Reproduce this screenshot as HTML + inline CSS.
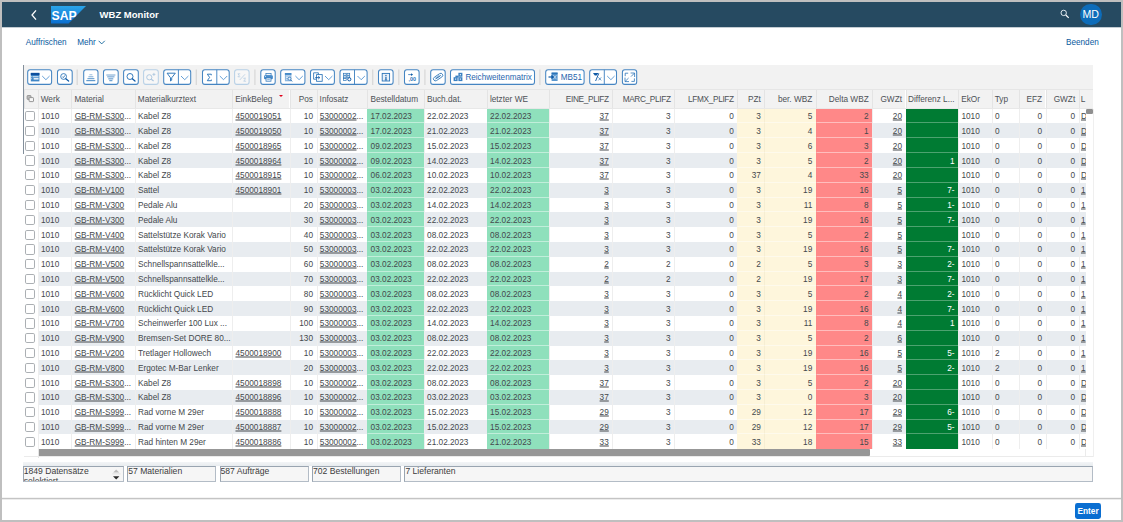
<!DOCTYPE html>
<html><head><meta charset="utf-8"><title>WBZ Monitor</title>
<style>
html,body{margin:0;padding:0;}
body{width:1123px;height:522px;overflow:hidden;background:#bfbfbf;font-family:"Liberation Sans",sans-serif;position:relative;}
#win{position:absolute;left:2px;top:2px;width:1119px;height:518px;background:#fff;overflow:hidden;}
#hdr{position:absolute;left:0;top:0;width:1119px;height:25px;background:#264a61;}
#title{position:absolute;left:97.6px;top:6.8px;font-size:9.5px;font-weight:bold;color:#fff;white-space:nowrap;}
.lnk{position:absolute;font-size:8.2px;color:#0a5a9e;white-space:nowrap;}
#tb{position:absolute;left:21.4px;top:63.4px;width:1069.6px;height:23.6px;background:#f2f2f2;}
.b{position:absolute;top:67.2px;height:13.7px;border:1px solid #4a87c0;border-radius:2.6px;background:#fff;box-sizing:content-box;}
.b.dis{border-color:#b5cfe4;}
.sep{position:absolute;top:67.5px;width:1px;height:15.5px;background:#d9d9d9;}
.dv{position:absolute;top:0;width:1px;height:13.7px;background:#4a87c0;}
.bt{position:absolute;top:69.2px;z-index:3;font-size:8.15px;line-height:13.7px;color:#1f65ad;white-space:nowrap;}
#grid{position:absolute;left:0;top:0;}
.h{position:absolute;top:87.4px;height:19.2px;background:#f2f2f2;font-size:8.25px;color:#4d5156;line-height:10px;padding-top:5.6px;white-space:nowrap;overflow:hidden;box-sizing:border-box;border-left:1px solid #e4e4e4;}
.c{position:absolute;height:14.81px;font-size:8.25px;color:#44484c;line-height:10px;white-space:nowrap;overflow:hidden;box-sizing:border-box;border-left:1px solid #eeeeee;}
.r{text-align:right;padding-right:3.5px;}
.l{padding-left:2.3px;}
.h.l{padding-left:2.1px;}
.u{text-decoration:underline;text-decoration-thickness:2px;text-underline-offset:0.2px;text-decoration-color:rgba(60,64,68,0.48);text-decoration-skip-ink:none;}
.cb{position:absolute;width:8.2px;height:8.2px;border:1px solid #abafb3;border-radius:1.8px;background:#fff;}
.st{position:absolute;top:464.3px;height:15.4px;border:1px solid #b3bcc6;border-top-color:#9aa5b1;border-left-color:#9aa5b1;background:#f6f6f6;font-size:8.6px;color:#3c3c3c;line-height:9.4px;overflow:hidden;box-sizing:border-box;padding-left:0;padding-top:0;white-space:normal;}
</style></head><body><div id="win">
<div id="hdr"></div><div style="position:absolute;left:0;top:25px;width:1119px;height:1px;background:#c3ccd3"></div>

<svg style="position:absolute;left:28px;top:7px" width="8" height="12" viewBox="0 0 8 12"><path d="M6 1.3 L2 6 L6 10.7" fill="none" stroke="#fff" stroke-width="1.3"/></svg>
<svg style="position:absolute;left:49px;top:4px" width="36" height="18" viewBox="0 0 36 18"><defs><linearGradient id="lg" x1="0" y1="0" x2="0" y2="1"><stop offset="0" stop-color="#2aa5ea"/><stop offset="1" stop-color="#0b6fd0"/></linearGradient></defs><path d="M0 0H35L17.6 17.4H0Z" fill="url(#lg)"/><text x="0.6" y="14.0" font-family="Liberation Sans" font-weight="bold" font-size="13.2" fill="#fff" textLength="25.2" lengthAdjust="spacingAndGlyphs">SAP</text></svg>
<div id="title">WBZ Monitor</div>
<svg style="position:absolute;left:1057px;top:6.4px" width="12" height="12" viewBox="0 0 12 12"><circle cx="4.7" cy="4.9" r="2.7" fill="none" stroke="#e8f0f6" stroke-width="0.95"/><path d="M6.8 7.0 L9.7 9.9" stroke="#fff" stroke-width="1.15"/></svg>
<div style="position:absolute;left:1078px;top:1.6px;width:21.6px;height:21.6px;border-radius:50%;background:#0d6cb9;color:#fff;font-size:10.6px;line-height:21.8px;text-align:center;">MD</div>
<div class="lnk" style="left:23.8px;top:36.2px">Auffrischen</div>
<div class="lnk" style="left:75.2px;top:36.2px">Mehr</div>
<svg style="position:absolute;left:96.4px;top:37.9px" width="7.4" height="5" viewBox="0 0 7 5"><path d="M0.4 0.8 L3.5 3.9 L6.6 0.8" fill="none" stroke="#0a6099" stroke-width="0.9"/></svg>
<div class="lnk" style="left:1064px;top:36.2px">Beenden</div>
<div id="tb"></div>
<div style="position:absolute;left:21px;top:62.8px;width:1.1px;height:89.4px;background:#838f9b;z-index:5"></div>
<div class="bt" style="left:463.4px">Reichweitenmatrix</div>
<div class="bt" style="left:558.8px">MB51</div>
<div class="h l" style="left:21.7px;width:13.9px;"></div>
<div class="h l" style="left:35.6px;width:33.8px;">Werk</div>
<div class="h l" style="left:69.4px;width:63.3px;">Material</div>
<div class="h l" style="left:132.7px;width:97.5px;">Materialkurztext</div>
<div class="h l" style="left:230.2px;width:57.3px;">EinkBeleg</div>
<div class="h r" style="left:287.5px;width:27.0px;">Pos</div>
<div class="h l" style="left:314.5px;width:50.8px;">Infosatz</div>
<div class="h l" style="left:365.3px;width:56.5px;">Bestelldatum</div>
<div class="h l" style="left:421.8px;width:63.0px;">Buch.dat.</div>
<div class="h l" style="left:484.8px;width:62.5px;">letzter WE</div>
<div class="h r" style="left:547.3px;width:63.0px;letter-spacing:-0.33px;">EINE_PLIFZ</div>
<div class="h r" style="left:610.3px;width:61.9px;letter-spacing:-0.33px;">MARC_PLIFZ</div>
<div class="h r" style="left:672.2px;width:63.1px;letter-spacing:-0.33px;">LFMX_PLIFZ</div>
<div class="h r" style="left:735.3px;width:27.1px;">PZt</div>
<div class="h r" style="left:762.4px;width:51.4px;">ber. WBZ</div>
<div class="h r" style="left:813.8px;width:56.4px;">Delta WBZ</div>
<div class="h r" style="left:870.2px;width:33.3px;">GWZt</div>
<div class="h r" style="left:903.5px;width:52.6px;">Differenz L...</div>
<div class="h l" style="left:956.1px;width:33.5px;">EkOr</div>
<div class="h l" style="left:989.6px;width:27.0px;">Typ</div>
<div class="h r" style="left:1016.6px;width:26.9px;">EFZ</div>
<div class="h r" style="left:1043.5px;width:33.2px;">GWZt</div>
<div class="h l" style="left:1076.7px;width:6.9px;padding-left:1.1px;">L</div>
<div style="position:absolute;left:1083.6px;top:87px;width:7.2px;height:19.6px;background:#f2f2f2"></div>
<div style="position:absolute;left:21.4px;top:106.1px;width:1069.6px;height:1px;background:#e8e8e8"></div>
<div style="position:absolute;left:21.4px;top:86.6px;width:1069.6px;height:1px;background:#e6e6e6"></div>
<svg style="position:absolute;left:24px;top:92px" width="10" height="10" viewBox="26 94 10 10"><rect x="27.1" y="95.5" width="3.9" height="3.9" rx="0.6" fill="#b9b9b9" stroke="#8c8c8c" stroke-width="0.8"/><rect x="29.1" y="97.6" width="4.4" height="4.0" rx="0.6" fill="#f6f6f6" stroke="#8c8c8c" stroke-width="0.9"/></svg>
<div style="position:absolute;left:277.1px;top:92.7px;width:0;height:0;border-left:2px solid transparent;border-right:2px solid transparent;border-top:2.2px solid #e0001a"></div>
<div style="position:absolute;left:21.7px;top:107px;width:1061.9px;height:14px;background:#fff"></div>
<div class="c l" style="left:21.7px;top:107px;height:14px;width:13.9px;padding-top:3px;border-left:none;background:#fff"></div>
<div class="cb" style="left:23.2px;top:109.07px"></div>
<div class="c l" style="left:35.6px;top:107px;height:14px;width:33.8px;padding-top:3px;">1010</div>
<div class="c l" style="left:69.4px;top:107px;height:14px;width:63.3px;padding-top:3px;"><span class="u">GB-RM-S300</span>...</div>
<div class="c l" style="left:132.7px;top:107px;height:14px;width:97.5px;padding-top:3px;">Kabel Z8</div>
<div class="c l" style="left:230.2px;top:107px;height:14px;width:57.3px;padding-top:3px;"><span class="u">4500019051</span></div>
<div class="c r" style="left:287.5px;top:107px;height:14px;width:27.0px;padding-top:3px;">10</div>
<div class="c l" style="left:314.5px;top:107px;height:14px;width:50.8px;padding-top:3px;"><span class="u">53000002</span>...</div>
<div class="c l" style="left:365.3px;top:107px;height:14px;width:56.5px;padding-top:3px;background:#8fe0bc;border-left-color:#8fe0bc;border-bottom:1px solid rgba(255,255,255,0.45);">17.02.2023</div>
<div class="c l" style="left:421.8px;top:107px;height:14px;width:63.0px;padding-top:3px;">22.02.2023</div>
<div class="c l" style="left:484.8px;top:107px;height:14px;width:62.5px;padding-top:3px;background:#8fe0bc;border-left-color:#8fe0bc;border-bottom:1px solid rgba(255,255,255,0.45);">22.02.2023</div>
<div class="c r" style="left:547.3px;top:107px;height:14px;width:63.0px;padding-top:3px;"><span class="u">37</span></div>
<div class="c r" style="left:610.3px;top:107px;height:14px;width:61.9px;padding-top:3px;">3</div>
<div class="c r" style="left:672.2px;top:107px;height:14px;width:63.1px;padding-top:3px;">0</div>
<div class="c r" style="left:735.3px;top:107px;height:14px;width:27.1px;padding-top:3px;background:#fef6dc;border-left-color:#fef6dc;border-bottom:1px solid rgba(255,255,255,0.45);">3</div>
<div class="c r" style="left:762.4px;top:107px;height:14px;width:51.4px;padding-top:3px;background:#fef6dc;border-left-color:#f6eed3;border-bottom:1px solid rgba(255,255,255,0.45);">5</div>
<div class="c r" style="left:813.8px;top:107px;height:14px;width:56.4px;padding-top:3px;background:#ff8888;border-left-color:#ff8888;border-bottom:1px solid rgba(255,255,255,0.45);">2</div>
<div class="c r" style="left:870.2px;top:107px;height:14px;width:33.3px;padding-top:3px;"><span class="u">20</span></div>
<div class="c r" style="left:903.5px;top:107px;height:14px;width:52.6px;padding-top:3px;background:#007b33;border-left-color:#007b33;border-bottom:1px solid rgba(255,255,255,0.3);color:#fff;"></div>
<div class="c l" style="left:956.1px;top:107px;height:14px;width:33.5px;padding-top:3px;">1010</div>
<div class="c l" style="left:989.6px;top:107px;height:14px;width:27.0px;padding-top:3px;">0</div>
<div class="c r" style="left:1016.6px;top:107px;height:14px;width:26.9px;padding-top:3px;">0</div>
<div class="c r" style="left:1043.5px;top:107px;height:14px;width:33.2px;padding-top:3px;">0</div>
<div class="c l" style="left:1076.7px;top:107px;height:14px;width:6.9px;padding-top:3px;padding-left:1.3px;"><span class="u">D</span></div>
<div style="position:absolute;left:21.7px;top:121px;width:1061.9px;height:15px;background:#e8ecf0"></div>
<div class="c l" style="left:21.7px;top:121px;height:15px;width:13.9px;padding-top:4px;border-left:none;background:#fff"></div>
<div class="cb" style="left:23.2px;top:123.88px"></div>
<div class="c l" style="left:35.6px;top:121px;height:15px;width:33.8px;padding-top:4px;">1010</div>
<div class="c l" style="left:69.4px;top:121px;height:15px;width:63.3px;padding-top:4px;"><span class="u">GB-RM-S300</span>...</div>
<div class="c l" style="left:132.7px;top:121px;height:15px;width:97.5px;padding-top:4px;">Kabel Z8</div>
<div class="c l" style="left:230.2px;top:121px;height:15px;width:57.3px;padding-top:4px;"><span class="u">4500019050</span></div>
<div class="c r" style="left:287.5px;top:121px;height:15px;width:27.0px;padding-top:4px;">10</div>
<div class="c l" style="left:314.5px;top:121px;height:15px;width:50.8px;padding-top:4px;"><span class="u">53000002</span>...</div>
<div class="c l" style="left:365.3px;top:121px;height:15px;width:56.5px;padding-top:4px;background:#8fe0bc;border-left-color:#8fe0bc;border-bottom:1px solid rgba(255,255,255,0.45);">17.02.2023</div>
<div class="c l" style="left:421.8px;top:121px;height:15px;width:63.0px;padding-top:4px;">21.02.2023</div>
<div class="c l" style="left:484.8px;top:121px;height:15px;width:62.5px;padding-top:4px;background:#8fe0bc;border-left-color:#8fe0bc;border-bottom:1px solid rgba(255,255,255,0.45);">21.02.2023</div>
<div class="c r" style="left:547.3px;top:121px;height:15px;width:63.0px;padding-top:4px;"><span class="u">37</span></div>
<div class="c r" style="left:610.3px;top:121px;height:15px;width:61.9px;padding-top:4px;">3</div>
<div class="c r" style="left:672.2px;top:121px;height:15px;width:63.1px;padding-top:4px;">0</div>
<div class="c r" style="left:735.3px;top:121px;height:15px;width:27.1px;padding-top:4px;background:#fef6dc;border-left-color:#fef6dc;border-bottom:1px solid rgba(255,255,255,0.45);">3</div>
<div class="c r" style="left:762.4px;top:121px;height:15px;width:51.4px;padding-top:4px;background:#fef6dc;border-left-color:#f6eed3;border-bottom:1px solid rgba(255,255,255,0.45);">4</div>
<div class="c r" style="left:813.8px;top:121px;height:15px;width:56.4px;padding-top:4px;background:#ff8888;border-left-color:#ff8888;border-bottom:1px solid rgba(255,255,255,0.45);">1</div>
<div class="c r" style="left:870.2px;top:121px;height:15px;width:33.3px;padding-top:4px;"><span class="u">20</span></div>
<div class="c r" style="left:903.5px;top:121px;height:15px;width:52.6px;padding-top:4px;background:#007b33;border-left-color:#007b33;border-bottom:1px solid rgba(255,255,255,0.3);color:#fff;"></div>
<div class="c l" style="left:956.1px;top:121px;height:15px;width:33.5px;padding-top:4px;">1010</div>
<div class="c l" style="left:989.6px;top:121px;height:15px;width:27.0px;padding-top:4px;">0</div>
<div class="c r" style="left:1016.6px;top:121px;height:15px;width:26.9px;padding-top:4px;">0</div>
<div class="c r" style="left:1043.5px;top:121px;height:15px;width:33.2px;padding-top:4px;">0</div>
<div class="c l" style="left:1076.7px;top:121px;height:15px;width:6.9px;padding-top:4px;padding-left:1.3px;"><span class="u">D</span></div>
<div style="position:absolute;left:21.7px;top:136px;width:1061.9px;height:15px;background:#fff"></div>
<div class="c l" style="left:21.7px;top:136px;height:15px;width:13.9px;padding-top:4px;border-left:none;background:#fff"></div>
<div class="cb" style="left:23.2px;top:138.68px"></div>
<div class="c l" style="left:35.6px;top:136px;height:15px;width:33.8px;padding-top:4px;">1010</div>
<div class="c l" style="left:69.4px;top:136px;height:15px;width:63.3px;padding-top:4px;"><span class="u">GB-RM-S300</span>...</div>
<div class="c l" style="left:132.7px;top:136px;height:15px;width:97.5px;padding-top:4px;">Kabel Z8</div>
<div class="c l" style="left:230.2px;top:136px;height:15px;width:57.3px;padding-top:4px;"><span class="u">4500018965</span></div>
<div class="c r" style="left:287.5px;top:136px;height:15px;width:27.0px;padding-top:4px;">10</div>
<div class="c l" style="left:314.5px;top:136px;height:15px;width:50.8px;padding-top:4px;"><span class="u">53000002</span>...</div>
<div class="c l" style="left:365.3px;top:136px;height:15px;width:56.5px;padding-top:4px;background:#8fe0bc;border-left-color:#8fe0bc;border-bottom:1px solid rgba(255,255,255,0.45);">09.02.2023</div>
<div class="c l" style="left:421.8px;top:136px;height:15px;width:63.0px;padding-top:4px;">15.02.2023</div>
<div class="c l" style="left:484.8px;top:136px;height:15px;width:62.5px;padding-top:4px;background:#8fe0bc;border-left-color:#8fe0bc;border-bottom:1px solid rgba(255,255,255,0.45);">15.02.2023</div>
<div class="c r" style="left:547.3px;top:136px;height:15px;width:63.0px;padding-top:4px;"><span class="u">37</span></div>
<div class="c r" style="left:610.3px;top:136px;height:15px;width:61.9px;padding-top:4px;">3</div>
<div class="c r" style="left:672.2px;top:136px;height:15px;width:63.1px;padding-top:4px;">0</div>
<div class="c r" style="left:735.3px;top:136px;height:15px;width:27.1px;padding-top:4px;background:#fef6dc;border-left-color:#fef6dc;border-bottom:1px solid rgba(255,255,255,0.45);">3</div>
<div class="c r" style="left:762.4px;top:136px;height:15px;width:51.4px;padding-top:4px;background:#fef6dc;border-left-color:#f6eed3;border-bottom:1px solid rgba(255,255,255,0.45);">6</div>
<div class="c r" style="left:813.8px;top:136px;height:15px;width:56.4px;padding-top:4px;background:#ff8888;border-left-color:#ff8888;border-bottom:1px solid rgba(255,255,255,0.45);">3</div>
<div class="c r" style="left:870.2px;top:136px;height:15px;width:33.3px;padding-top:4px;"><span class="u">20</span></div>
<div class="c r" style="left:903.5px;top:136px;height:15px;width:52.6px;padding-top:4px;background:#007b33;border-left-color:#007b33;border-bottom:1px solid rgba(255,255,255,0.3);color:#fff;"></div>
<div class="c l" style="left:956.1px;top:136px;height:15px;width:33.5px;padding-top:4px;">1010</div>
<div class="c l" style="left:989.6px;top:136px;height:15px;width:27.0px;padding-top:4px;">0</div>
<div class="c r" style="left:1016.6px;top:136px;height:15px;width:26.9px;padding-top:4px;">0</div>
<div class="c r" style="left:1043.5px;top:136px;height:15px;width:33.2px;padding-top:4px;">0</div>
<div class="c l" style="left:1076.7px;top:136px;height:15px;width:6.9px;padding-top:4px;padding-left:1.3px;"><span class="u">D</span></div>
<div style="position:absolute;left:21.7px;top:151px;width:1061.9px;height:15px;background:#e8ecf0"></div>
<div class="c l" style="left:21.7px;top:151px;height:15px;width:13.9px;padding-top:4px;border-left:none;background:#fff"></div>
<div class="cb" style="left:23.2px;top:153.49px"></div>
<div class="c l" style="left:35.6px;top:151px;height:15px;width:33.8px;padding-top:4px;">1010</div>
<div class="c l" style="left:69.4px;top:151px;height:15px;width:63.3px;padding-top:4px;"><span class="u">GB-RM-S300</span>...</div>
<div class="c l" style="left:132.7px;top:151px;height:15px;width:97.5px;padding-top:4px;">Kabel Z8</div>
<div class="c l" style="left:230.2px;top:151px;height:15px;width:57.3px;padding-top:4px;"><span class="u">4500018964</span></div>
<div class="c r" style="left:287.5px;top:151px;height:15px;width:27.0px;padding-top:4px;">10</div>
<div class="c l" style="left:314.5px;top:151px;height:15px;width:50.8px;padding-top:4px;"><span class="u">53000002</span>...</div>
<div class="c l" style="left:365.3px;top:151px;height:15px;width:56.5px;padding-top:4px;background:#8fe0bc;border-left-color:#8fe0bc;border-bottom:1px solid rgba(255,255,255,0.45);">09.02.2023</div>
<div class="c l" style="left:421.8px;top:151px;height:15px;width:63.0px;padding-top:4px;">14.02.2023</div>
<div class="c l" style="left:484.8px;top:151px;height:15px;width:62.5px;padding-top:4px;background:#8fe0bc;border-left-color:#8fe0bc;border-bottom:1px solid rgba(255,255,255,0.45);">14.02.2023</div>
<div class="c r" style="left:547.3px;top:151px;height:15px;width:63.0px;padding-top:4px;"><span class="u">37</span></div>
<div class="c r" style="left:610.3px;top:151px;height:15px;width:61.9px;padding-top:4px;">3</div>
<div class="c r" style="left:672.2px;top:151px;height:15px;width:63.1px;padding-top:4px;">0</div>
<div class="c r" style="left:735.3px;top:151px;height:15px;width:27.1px;padding-top:4px;background:#fef6dc;border-left-color:#fef6dc;border-bottom:1px solid rgba(255,255,255,0.45);">3</div>
<div class="c r" style="left:762.4px;top:151px;height:15px;width:51.4px;padding-top:4px;background:#fef6dc;border-left-color:#f6eed3;border-bottom:1px solid rgba(255,255,255,0.45);">5</div>
<div class="c r" style="left:813.8px;top:151px;height:15px;width:56.4px;padding-top:4px;background:#ff8888;border-left-color:#ff8888;border-bottom:1px solid rgba(255,255,255,0.45);">2</div>
<div class="c r" style="left:870.2px;top:151px;height:15px;width:33.3px;padding-top:4px;"><span class="u">20</span></div>
<div class="c r" style="left:903.5px;top:151px;height:15px;width:52.6px;padding-top:4px;background:#007b33;border-left-color:#007b33;border-bottom:1px solid rgba(255,255,255,0.3);color:#fff;">1</div>
<div class="c l" style="left:956.1px;top:151px;height:15px;width:33.5px;padding-top:4px;">1010</div>
<div class="c l" style="left:989.6px;top:151px;height:15px;width:27.0px;padding-top:4px;">0</div>
<div class="c r" style="left:1016.6px;top:151px;height:15px;width:26.9px;padding-top:4px;">0</div>
<div class="c r" style="left:1043.5px;top:151px;height:15px;width:33.2px;padding-top:4px;">0</div>
<div class="c l" style="left:1076.7px;top:151px;height:15px;width:6.9px;padding-top:4px;padding-left:1.3px;"><span class="u">D</span></div>
<div style="position:absolute;left:21.7px;top:166px;width:1061.9px;height:15px;background:#fff"></div>
<div class="c l" style="left:21.7px;top:166px;height:15px;width:13.9px;padding-top:3px;border-left:none;background:#fff"></div>
<div class="cb" style="left:23.2px;top:168.29px"></div>
<div class="c l" style="left:35.6px;top:166px;height:15px;width:33.8px;padding-top:3px;">1010</div>
<div class="c l" style="left:69.4px;top:166px;height:15px;width:63.3px;padding-top:3px;"><span class="u">GB-RM-S300</span>...</div>
<div class="c l" style="left:132.7px;top:166px;height:15px;width:97.5px;padding-top:3px;">Kabel Z8</div>
<div class="c l" style="left:230.2px;top:166px;height:15px;width:57.3px;padding-top:3px;"><span class="u">4500018915</span></div>
<div class="c r" style="left:287.5px;top:166px;height:15px;width:27.0px;padding-top:3px;">10</div>
<div class="c l" style="left:314.5px;top:166px;height:15px;width:50.8px;padding-top:3px;"><span class="u">53000002</span>...</div>
<div class="c l" style="left:365.3px;top:166px;height:15px;width:56.5px;padding-top:3px;background:#8fe0bc;border-left-color:#8fe0bc;border-bottom:1px solid rgba(255,255,255,0.45);">06.02.2023</div>
<div class="c l" style="left:421.8px;top:166px;height:15px;width:63.0px;padding-top:3px;">10.02.2023</div>
<div class="c l" style="left:484.8px;top:166px;height:15px;width:62.5px;padding-top:3px;background:#8fe0bc;border-left-color:#8fe0bc;border-bottom:1px solid rgba(255,255,255,0.45);">10.02.2023</div>
<div class="c r" style="left:547.3px;top:166px;height:15px;width:63.0px;padding-top:3px;"><span class="u">37</span></div>
<div class="c r" style="left:610.3px;top:166px;height:15px;width:61.9px;padding-top:3px;">3</div>
<div class="c r" style="left:672.2px;top:166px;height:15px;width:63.1px;padding-top:3px;">0</div>
<div class="c r" style="left:735.3px;top:166px;height:15px;width:27.1px;padding-top:3px;background:#fef6dc;border-left-color:#fef6dc;border-bottom:1px solid rgba(255,255,255,0.45);">37</div>
<div class="c r" style="left:762.4px;top:166px;height:15px;width:51.4px;padding-top:3px;background:#fef6dc;border-left-color:#f6eed3;border-bottom:1px solid rgba(255,255,255,0.45);">4</div>
<div class="c r" style="left:813.8px;top:166px;height:15px;width:56.4px;padding-top:3px;background:#ff8888;border-left-color:#ff8888;border-bottom:1px solid rgba(255,255,255,0.45);">33</div>
<div class="c r" style="left:870.2px;top:166px;height:15px;width:33.3px;padding-top:3px;"><span class="u">20</span></div>
<div class="c r" style="left:903.5px;top:166px;height:15px;width:52.6px;padding-top:3px;background:#007b33;border-left-color:#007b33;border-bottom:1px solid rgba(255,255,255,0.3);color:#fff;"></div>
<div class="c l" style="left:956.1px;top:166px;height:15px;width:33.5px;padding-top:3px;">1010</div>
<div class="c l" style="left:989.6px;top:166px;height:15px;width:27.0px;padding-top:3px;">0</div>
<div class="c r" style="left:1016.6px;top:166px;height:15px;width:26.9px;padding-top:3px;">0</div>
<div class="c r" style="left:1043.5px;top:166px;height:15px;width:33.2px;padding-top:3px;">0</div>
<div class="c l" style="left:1076.7px;top:166px;height:15px;width:6.9px;padding-top:3px;padding-left:1.3px;"><span class="u">D</span></div>
<div style="position:absolute;left:21.7px;top:181px;width:1061.9px;height:15px;background:#e8ecf0"></div>
<div class="c l" style="left:21.7px;top:181px;height:15px;width:13.9px;padding-top:3px;border-left:none;background:#fff"></div>
<div class="cb" style="left:23.2px;top:183.10px"></div>
<div class="c l" style="left:35.6px;top:181px;height:15px;width:33.8px;padding-top:3px;">1010</div>
<div class="c l" style="left:69.4px;top:181px;height:15px;width:63.3px;padding-top:3px;"><span class="u">GB-RM-V100</span></div>
<div class="c l" style="left:132.7px;top:181px;height:15px;width:97.5px;padding-top:3px;">Sattel</div>
<div class="c l" style="left:230.2px;top:181px;height:15px;width:57.3px;padding-top:3px;"><span class="u">4500018901</span></div>
<div class="c r" style="left:287.5px;top:181px;height:15px;width:27.0px;padding-top:3px;">10</div>
<div class="c l" style="left:314.5px;top:181px;height:15px;width:50.8px;padding-top:3px;"><span class="u">53000003</span>...</div>
<div class="c l" style="left:365.3px;top:181px;height:15px;width:56.5px;padding-top:3px;background:#8fe0bc;border-left-color:#8fe0bc;border-bottom:1px solid rgba(255,255,255,0.45);">03.02.2023</div>
<div class="c l" style="left:421.8px;top:181px;height:15px;width:63.0px;padding-top:3px;">22.02.2023</div>
<div class="c l" style="left:484.8px;top:181px;height:15px;width:62.5px;padding-top:3px;background:#8fe0bc;border-left-color:#8fe0bc;border-bottom:1px solid rgba(255,255,255,0.45);">22.02.2023</div>
<div class="c r" style="left:547.3px;top:181px;height:15px;width:63.0px;padding-top:3px;"><span class="u">3</span></div>
<div class="c r" style="left:610.3px;top:181px;height:15px;width:61.9px;padding-top:3px;">3</div>
<div class="c r" style="left:672.2px;top:181px;height:15px;width:63.1px;padding-top:3px;">0</div>
<div class="c r" style="left:735.3px;top:181px;height:15px;width:27.1px;padding-top:3px;background:#fef6dc;border-left-color:#fef6dc;border-bottom:1px solid rgba(255,255,255,0.45);">3</div>
<div class="c r" style="left:762.4px;top:181px;height:15px;width:51.4px;padding-top:3px;background:#fef6dc;border-left-color:#f6eed3;border-bottom:1px solid rgba(255,255,255,0.45);">19</div>
<div class="c r" style="left:813.8px;top:181px;height:15px;width:56.4px;padding-top:3px;background:#ff8888;border-left-color:#ff8888;border-bottom:1px solid rgba(255,255,255,0.45);">16</div>
<div class="c r" style="left:870.2px;top:181px;height:15px;width:33.3px;padding-top:3px;"><span class="u">5</span></div>
<div class="c r" style="left:903.5px;top:181px;height:15px;width:52.6px;padding-top:3px;background:#007b33;border-left-color:#007b33;border-bottom:1px solid rgba(255,255,255,0.3);color:#fff;">7-</div>
<div class="c l" style="left:956.1px;top:181px;height:15px;width:33.5px;padding-top:3px;">1010</div>
<div class="c l" style="left:989.6px;top:181px;height:15px;width:27.0px;padding-top:3px;">0</div>
<div class="c r" style="left:1016.6px;top:181px;height:15px;width:26.9px;padding-top:3px;">0</div>
<div class="c r" style="left:1043.5px;top:181px;height:15px;width:33.2px;padding-top:3px;">0</div>
<div class="c l" style="left:1076.7px;top:181px;height:15px;width:6.9px;padding-top:3px;padding-left:1.3px;"><span class="u">1</span></div>
<div style="position:absolute;left:21.7px;top:196px;width:1061.9px;height:14px;background:#fff"></div>
<div class="c l" style="left:21.7px;top:196px;height:14px;width:13.9px;padding-top:3px;border-left:none;background:#fff"></div>
<div class="cb" style="left:23.2px;top:197.91px"></div>
<div class="c l" style="left:35.6px;top:196px;height:14px;width:33.8px;padding-top:3px;">1010</div>
<div class="c l" style="left:69.4px;top:196px;height:14px;width:63.3px;padding-top:3px;"><span class="u">GB-RM-V300</span></div>
<div class="c l" style="left:132.7px;top:196px;height:14px;width:97.5px;padding-top:3px;">Pedale Alu</div>
<div class="c l" style="left:230.2px;top:196px;height:14px;width:57.3px;padding-top:3px;"></div>
<div class="c r" style="left:287.5px;top:196px;height:14px;width:27.0px;padding-top:3px;">20</div>
<div class="c l" style="left:314.5px;top:196px;height:14px;width:50.8px;padding-top:3px;"><span class="u">53000003</span>...</div>
<div class="c l" style="left:365.3px;top:196px;height:14px;width:56.5px;padding-top:3px;background:#8fe0bc;border-left-color:#8fe0bc;border-bottom:1px solid rgba(255,255,255,0.45);">03.02.2023</div>
<div class="c l" style="left:421.8px;top:196px;height:14px;width:63.0px;padding-top:3px;">14.02.2023</div>
<div class="c l" style="left:484.8px;top:196px;height:14px;width:62.5px;padding-top:3px;background:#8fe0bc;border-left-color:#8fe0bc;border-bottom:1px solid rgba(255,255,255,0.45);">14.02.2023</div>
<div class="c r" style="left:547.3px;top:196px;height:14px;width:63.0px;padding-top:3px;"><span class="u">3</span></div>
<div class="c r" style="left:610.3px;top:196px;height:14px;width:61.9px;padding-top:3px;">3</div>
<div class="c r" style="left:672.2px;top:196px;height:14px;width:63.1px;padding-top:3px;">0</div>
<div class="c r" style="left:735.3px;top:196px;height:14px;width:27.1px;padding-top:3px;background:#fef6dc;border-left-color:#fef6dc;border-bottom:1px solid rgba(255,255,255,0.45);">3</div>
<div class="c r" style="left:762.4px;top:196px;height:14px;width:51.4px;padding-top:3px;background:#fef6dc;border-left-color:#f6eed3;border-bottom:1px solid rgba(255,255,255,0.45);">11</div>
<div class="c r" style="left:813.8px;top:196px;height:14px;width:56.4px;padding-top:3px;background:#ff8888;border-left-color:#ff8888;border-bottom:1px solid rgba(255,255,255,0.45);">8</div>
<div class="c r" style="left:870.2px;top:196px;height:14px;width:33.3px;padding-top:3px;"><span class="u">5</span></div>
<div class="c r" style="left:903.5px;top:196px;height:14px;width:52.6px;padding-top:3px;background:#007b33;border-left-color:#007b33;border-bottom:1px solid rgba(255,255,255,0.3);color:#fff;">1-</div>
<div class="c l" style="left:956.1px;top:196px;height:14px;width:33.5px;padding-top:3px;">1010</div>
<div class="c l" style="left:989.6px;top:196px;height:14px;width:27.0px;padding-top:3px;">0</div>
<div class="c r" style="left:1016.6px;top:196px;height:14px;width:26.9px;padding-top:3px;">0</div>
<div class="c r" style="left:1043.5px;top:196px;height:14px;width:33.2px;padding-top:3px;">0</div>
<div class="c l" style="left:1076.7px;top:196px;height:14px;width:6.9px;padding-top:3px;padding-left:1.3px;"><span class="u">1</span></div>
<div style="position:absolute;left:21.7px;top:210px;width:1061.9px;height:15px;background:#e8ecf0"></div>
<div class="c l" style="left:21.7px;top:210px;height:15px;width:13.9px;padding-top:4px;border-left:none;background:#fff"></div>
<div class="cb" style="left:23.2px;top:212.71px"></div>
<div class="c l" style="left:35.6px;top:210px;height:15px;width:33.8px;padding-top:4px;">1010</div>
<div class="c l" style="left:69.4px;top:210px;height:15px;width:63.3px;padding-top:4px;"><span class="u">GB-RM-V300</span></div>
<div class="c l" style="left:132.7px;top:210px;height:15px;width:97.5px;padding-top:4px;">Pedale Alu</div>
<div class="c l" style="left:230.2px;top:210px;height:15px;width:57.3px;padding-top:4px;"></div>
<div class="c r" style="left:287.5px;top:210px;height:15px;width:27.0px;padding-top:4px;">30</div>
<div class="c l" style="left:314.5px;top:210px;height:15px;width:50.8px;padding-top:4px;"><span class="u">53000003</span>...</div>
<div class="c l" style="left:365.3px;top:210px;height:15px;width:56.5px;padding-top:4px;background:#8fe0bc;border-left-color:#8fe0bc;border-bottom:1px solid rgba(255,255,255,0.45);">03.02.2023</div>
<div class="c l" style="left:421.8px;top:210px;height:15px;width:63.0px;padding-top:4px;">22.02.2023</div>
<div class="c l" style="left:484.8px;top:210px;height:15px;width:62.5px;padding-top:4px;background:#8fe0bc;border-left-color:#8fe0bc;border-bottom:1px solid rgba(255,255,255,0.45);">22.02.2023</div>
<div class="c r" style="left:547.3px;top:210px;height:15px;width:63.0px;padding-top:4px;"><span class="u">3</span></div>
<div class="c r" style="left:610.3px;top:210px;height:15px;width:61.9px;padding-top:4px;">3</div>
<div class="c r" style="left:672.2px;top:210px;height:15px;width:63.1px;padding-top:4px;">0</div>
<div class="c r" style="left:735.3px;top:210px;height:15px;width:27.1px;padding-top:4px;background:#fef6dc;border-left-color:#fef6dc;border-bottom:1px solid rgba(255,255,255,0.45);">3</div>
<div class="c r" style="left:762.4px;top:210px;height:15px;width:51.4px;padding-top:4px;background:#fef6dc;border-left-color:#f6eed3;border-bottom:1px solid rgba(255,255,255,0.45);">19</div>
<div class="c r" style="left:813.8px;top:210px;height:15px;width:56.4px;padding-top:4px;background:#ff8888;border-left-color:#ff8888;border-bottom:1px solid rgba(255,255,255,0.45);">16</div>
<div class="c r" style="left:870.2px;top:210px;height:15px;width:33.3px;padding-top:4px;"><span class="u">5</span></div>
<div class="c r" style="left:903.5px;top:210px;height:15px;width:52.6px;padding-top:4px;background:#007b33;border-left-color:#007b33;border-bottom:1px solid rgba(255,255,255,0.3);color:#fff;">7-</div>
<div class="c l" style="left:956.1px;top:210px;height:15px;width:33.5px;padding-top:4px;">1010</div>
<div class="c l" style="left:989.6px;top:210px;height:15px;width:27.0px;padding-top:4px;">0</div>
<div class="c r" style="left:1016.6px;top:210px;height:15px;width:26.9px;padding-top:4px;">0</div>
<div class="c r" style="left:1043.5px;top:210px;height:15px;width:33.2px;padding-top:4px;">0</div>
<div class="c l" style="left:1076.7px;top:210px;height:15px;width:6.9px;padding-top:4px;padding-left:1.3px;"><span class="u">1</span></div>
<div style="position:absolute;left:21.7px;top:225px;width:1061.9px;height:15px;background:#fff"></div>
<div class="c l" style="left:21.7px;top:225px;height:15px;width:13.9px;padding-top:4px;border-left:none;background:#fff"></div>
<div class="cb" style="left:23.2px;top:227.52px"></div>
<div class="c l" style="left:35.6px;top:225px;height:15px;width:33.8px;padding-top:4px;">1010</div>
<div class="c l" style="left:69.4px;top:225px;height:15px;width:63.3px;padding-top:4px;"><span class="u">GB-RM-V400</span></div>
<div class="c l" style="left:132.7px;top:225px;height:15px;width:97.5px;padding-top:4px;">Sattelstütze Korak Vario</div>
<div class="c l" style="left:230.2px;top:225px;height:15px;width:57.3px;padding-top:4px;"></div>
<div class="c r" style="left:287.5px;top:225px;height:15px;width:27.0px;padding-top:4px;">40</div>
<div class="c l" style="left:314.5px;top:225px;height:15px;width:50.8px;padding-top:4px;"><span class="u">53000003</span>...</div>
<div class="c l" style="left:365.3px;top:225px;height:15px;width:56.5px;padding-top:4px;background:#8fe0bc;border-left-color:#8fe0bc;border-bottom:1px solid rgba(255,255,255,0.45);">03.02.2023</div>
<div class="c l" style="left:421.8px;top:225px;height:15px;width:63.0px;padding-top:4px;">08.02.2023</div>
<div class="c l" style="left:484.8px;top:225px;height:15px;width:62.5px;padding-top:4px;background:#8fe0bc;border-left-color:#8fe0bc;border-bottom:1px solid rgba(255,255,255,0.45);">08.02.2023</div>
<div class="c r" style="left:547.3px;top:225px;height:15px;width:63.0px;padding-top:4px;"><span class="u">3</span></div>
<div class="c r" style="left:610.3px;top:225px;height:15px;width:61.9px;padding-top:4px;">3</div>
<div class="c r" style="left:672.2px;top:225px;height:15px;width:63.1px;padding-top:4px;">0</div>
<div class="c r" style="left:735.3px;top:225px;height:15px;width:27.1px;padding-top:4px;background:#fef6dc;border-left-color:#fef6dc;border-bottom:1px solid rgba(255,255,255,0.45);">3</div>
<div class="c r" style="left:762.4px;top:225px;height:15px;width:51.4px;padding-top:4px;background:#fef6dc;border-left-color:#f6eed3;border-bottom:1px solid rgba(255,255,255,0.45);">5</div>
<div class="c r" style="left:813.8px;top:225px;height:15px;width:56.4px;padding-top:4px;background:#ff8888;border-left-color:#ff8888;border-bottom:1px solid rgba(255,255,255,0.45);">2</div>
<div class="c r" style="left:870.2px;top:225px;height:15px;width:33.3px;padding-top:4px;"><span class="u">5</span></div>
<div class="c r" style="left:903.5px;top:225px;height:15px;width:52.6px;padding-top:4px;background:#007b33;border-left-color:#007b33;border-bottom:1px solid rgba(255,255,255,0.3);color:#fff;"></div>
<div class="c l" style="left:956.1px;top:225px;height:15px;width:33.5px;padding-top:4px;">1010</div>
<div class="c l" style="left:989.6px;top:225px;height:15px;width:27.0px;padding-top:4px;">0</div>
<div class="c r" style="left:1016.6px;top:225px;height:15px;width:26.9px;padding-top:4px;">0</div>
<div class="c r" style="left:1043.5px;top:225px;height:15px;width:33.2px;padding-top:4px;">0</div>
<div class="c l" style="left:1076.7px;top:225px;height:15px;width:6.9px;padding-top:4px;padding-left:1.3px;"><span class="u">1</span></div>
<div style="position:absolute;left:21.7px;top:240px;width:1061.9px;height:15px;background:#e8ecf0"></div>
<div class="c l" style="left:21.7px;top:240px;height:15px;width:13.9px;padding-top:3px;border-left:none;background:#fff"></div>
<div class="cb" style="left:23.2px;top:242.32px"></div>
<div class="c l" style="left:35.6px;top:240px;height:15px;width:33.8px;padding-top:3px;">1010</div>
<div class="c l" style="left:69.4px;top:240px;height:15px;width:63.3px;padding-top:3px;"><span class="u">GB-RM-V400</span></div>
<div class="c l" style="left:132.7px;top:240px;height:15px;width:97.5px;padding-top:3px;">Sattelstütze Korak Vario</div>
<div class="c l" style="left:230.2px;top:240px;height:15px;width:57.3px;padding-top:3px;"></div>
<div class="c r" style="left:287.5px;top:240px;height:15px;width:27.0px;padding-top:3px;">50</div>
<div class="c l" style="left:314.5px;top:240px;height:15px;width:50.8px;padding-top:3px;"><span class="u">53000003</span>...</div>
<div class="c l" style="left:365.3px;top:240px;height:15px;width:56.5px;padding-top:3px;background:#8fe0bc;border-left-color:#8fe0bc;border-bottom:1px solid rgba(255,255,255,0.45);">03.02.2023</div>
<div class="c l" style="left:421.8px;top:240px;height:15px;width:63.0px;padding-top:3px;">22.02.2023</div>
<div class="c l" style="left:484.8px;top:240px;height:15px;width:62.5px;padding-top:3px;background:#8fe0bc;border-left-color:#8fe0bc;border-bottom:1px solid rgba(255,255,255,0.45);">22.02.2023</div>
<div class="c r" style="left:547.3px;top:240px;height:15px;width:63.0px;padding-top:3px;"><span class="u">3</span></div>
<div class="c r" style="left:610.3px;top:240px;height:15px;width:61.9px;padding-top:3px;">3</div>
<div class="c r" style="left:672.2px;top:240px;height:15px;width:63.1px;padding-top:3px;">0</div>
<div class="c r" style="left:735.3px;top:240px;height:15px;width:27.1px;padding-top:3px;background:#fef6dc;border-left-color:#fef6dc;border-bottom:1px solid rgba(255,255,255,0.45);">3</div>
<div class="c r" style="left:762.4px;top:240px;height:15px;width:51.4px;padding-top:3px;background:#fef6dc;border-left-color:#f6eed3;border-bottom:1px solid rgba(255,255,255,0.45);">19</div>
<div class="c r" style="left:813.8px;top:240px;height:15px;width:56.4px;padding-top:3px;background:#ff8888;border-left-color:#ff8888;border-bottom:1px solid rgba(255,255,255,0.45);">16</div>
<div class="c r" style="left:870.2px;top:240px;height:15px;width:33.3px;padding-top:3px;"><span class="u">5</span></div>
<div class="c r" style="left:903.5px;top:240px;height:15px;width:52.6px;padding-top:3px;background:#007b33;border-left-color:#007b33;border-bottom:1px solid rgba(255,255,255,0.3);color:#fff;">7-</div>
<div class="c l" style="left:956.1px;top:240px;height:15px;width:33.5px;padding-top:3px;">1010</div>
<div class="c l" style="left:989.6px;top:240px;height:15px;width:27.0px;padding-top:3px;">0</div>
<div class="c r" style="left:1016.6px;top:240px;height:15px;width:26.9px;padding-top:3px;">0</div>
<div class="c r" style="left:1043.5px;top:240px;height:15px;width:33.2px;padding-top:3px;">0</div>
<div class="c l" style="left:1076.7px;top:240px;height:15px;width:6.9px;padding-top:3px;padding-left:1.3px;"><span class="u">1</span></div>
<div style="position:absolute;left:21.7px;top:255px;width:1061.9px;height:15px;background:#fff"></div>
<div class="c l" style="left:21.7px;top:255px;height:15px;width:13.9px;padding-top:3px;border-left:none;background:#fff"></div>
<div class="cb" style="left:23.2px;top:257.13px"></div>
<div class="c l" style="left:35.6px;top:255px;height:15px;width:33.8px;padding-top:3px;">1010</div>
<div class="c l" style="left:69.4px;top:255px;height:15px;width:63.3px;padding-top:3px;"><span class="u">GB-RM-V500</span></div>
<div class="c l" style="left:132.7px;top:255px;height:15px;width:97.5px;padding-top:3px;">Schnellspannsattelkle...</div>
<div class="c l" style="left:230.2px;top:255px;height:15px;width:57.3px;padding-top:3px;"></div>
<div class="c r" style="left:287.5px;top:255px;height:15px;width:27.0px;padding-top:3px;">60</div>
<div class="c l" style="left:314.5px;top:255px;height:15px;width:50.8px;padding-top:3px;"><span class="u">53000003</span>...</div>
<div class="c l" style="left:365.3px;top:255px;height:15px;width:56.5px;padding-top:3px;background:#8fe0bc;border-left-color:#8fe0bc;border-bottom:1px solid rgba(255,255,255,0.45);">03.02.2023</div>
<div class="c l" style="left:421.8px;top:255px;height:15px;width:63.0px;padding-top:3px;">08.02.2023</div>
<div class="c l" style="left:484.8px;top:255px;height:15px;width:62.5px;padding-top:3px;background:#8fe0bc;border-left-color:#8fe0bc;border-bottom:1px solid rgba(255,255,255,0.45);">08.02.2023</div>
<div class="c r" style="left:547.3px;top:255px;height:15px;width:63.0px;padding-top:3px;"><span class="u">2</span></div>
<div class="c r" style="left:610.3px;top:255px;height:15px;width:61.9px;padding-top:3px;">2</div>
<div class="c r" style="left:672.2px;top:255px;height:15px;width:63.1px;padding-top:3px;">0</div>
<div class="c r" style="left:735.3px;top:255px;height:15px;width:27.1px;padding-top:3px;background:#fef6dc;border-left-color:#fef6dc;border-bottom:1px solid rgba(255,255,255,0.45);">2</div>
<div class="c r" style="left:762.4px;top:255px;height:15px;width:51.4px;padding-top:3px;background:#fef6dc;border-left-color:#f6eed3;border-bottom:1px solid rgba(255,255,255,0.45);">5</div>
<div class="c r" style="left:813.8px;top:255px;height:15px;width:56.4px;padding-top:3px;background:#ff8888;border-left-color:#ff8888;border-bottom:1px solid rgba(255,255,255,0.45);">3</div>
<div class="c r" style="left:870.2px;top:255px;height:15px;width:33.3px;padding-top:3px;"><span class="u">3</span></div>
<div class="c r" style="left:903.5px;top:255px;height:15px;width:52.6px;padding-top:3px;background:#007b33;border-left-color:#007b33;border-bottom:1px solid rgba(255,255,255,0.3);color:#fff;">2-</div>
<div class="c l" style="left:956.1px;top:255px;height:15px;width:33.5px;padding-top:3px;">1010</div>
<div class="c l" style="left:989.6px;top:255px;height:15px;width:27.0px;padding-top:3px;">0</div>
<div class="c r" style="left:1016.6px;top:255px;height:15px;width:26.9px;padding-top:3px;">0</div>
<div class="c r" style="left:1043.5px;top:255px;height:15px;width:33.2px;padding-top:3px;">0</div>
<div class="c l" style="left:1076.7px;top:255px;height:15px;width:6.9px;padding-top:3px;padding-left:1.3px;"><span class="u">1</span></div>
<div style="position:absolute;left:21.7px;top:270px;width:1061.9px;height:14px;background:#e8ecf0"></div>
<div class="c l" style="left:21.7px;top:270px;height:14px;width:13.9px;padding-top:3px;border-left:none;background:#fff"></div>
<div class="cb" style="left:23.2px;top:271.94px"></div>
<div class="c l" style="left:35.6px;top:270px;height:14px;width:33.8px;padding-top:3px;">1010</div>
<div class="c l" style="left:69.4px;top:270px;height:14px;width:63.3px;padding-top:3px;"><span class="u">GB-RM-V500</span></div>
<div class="c l" style="left:132.7px;top:270px;height:14px;width:97.5px;padding-top:3px;">Schnellspannsattelkle...</div>
<div class="c l" style="left:230.2px;top:270px;height:14px;width:57.3px;padding-top:3px;"></div>
<div class="c r" style="left:287.5px;top:270px;height:14px;width:27.0px;padding-top:3px;">70</div>
<div class="c l" style="left:314.5px;top:270px;height:14px;width:50.8px;padding-top:3px;"><span class="u">53000003</span>...</div>
<div class="c l" style="left:365.3px;top:270px;height:14px;width:56.5px;padding-top:3px;background:#8fe0bc;border-left-color:#8fe0bc;border-bottom:1px solid rgba(255,255,255,0.45);">03.02.2023</div>
<div class="c l" style="left:421.8px;top:270px;height:14px;width:63.0px;padding-top:3px;">22.02.2023</div>
<div class="c l" style="left:484.8px;top:270px;height:14px;width:62.5px;padding-top:3px;background:#8fe0bc;border-left-color:#8fe0bc;border-bottom:1px solid rgba(255,255,255,0.45);">22.02.2023</div>
<div class="c r" style="left:547.3px;top:270px;height:14px;width:63.0px;padding-top:3px;"><span class="u">2</span></div>
<div class="c r" style="left:610.3px;top:270px;height:14px;width:61.9px;padding-top:3px;">2</div>
<div class="c r" style="left:672.2px;top:270px;height:14px;width:63.1px;padding-top:3px;">0</div>
<div class="c r" style="left:735.3px;top:270px;height:14px;width:27.1px;padding-top:3px;background:#fef6dc;border-left-color:#fef6dc;border-bottom:1px solid rgba(255,255,255,0.45);">2</div>
<div class="c r" style="left:762.4px;top:270px;height:14px;width:51.4px;padding-top:3px;background:#fef6dc;border-left-color:#f6eed3;border-bottom:1px solid rgba(255,255,255,0.45);">19</div>
<div class="c r" style="left:813.8px;top:270px;height:14px;width:56.4px;padding-top:3px;background:#ff8888;border-left-color:#ff8888;border-bottom:1px solid rgba(255,255,255,0.45);">17</div>
<div class="c r" style="left:870.2px;top:270px;height:14px;width:33.3px;padding-top:3px;"><span class="u">3</span></div>
<div class="c r" style="left:903.5px;top:270px;height:14px;width:52.6px;padding-top:3px;background:#007b33;border-left-color:#007b33;border-bottom:1px solid rgba(255,255,255,0.3);color:#fff;">7-</div>
<div class="c l" style="left:956.1px;top:270px;height:14px;width:33.5px;padding-top:3px;">1010</div>
<div class="c l" style="left:989.6px;top:270px;height:14px;width:27.0px;padding-top:3px;">0</div>
<div class="c r" style="left:1016.6px;top:270px;height:14px;width:26.9px;padding-top:3px;">0</div>
<div class="c r" style="left:1043.5px;top:270px;height:14px;width:33.2px;padding-top:3px;">0</div>
<div class="c l" style="left:1076.7px;top:270px;height:14px;width:6.9px;padding-top:3px;padding-left:1.3px;"><span class="u">1</span></div>
<div style="position:absolute;left:21.7px;top:284px;width:1061.9px;height:15px;background:#fff"></div>
<div class="c l" style="left:21.7px;top:284px;height:15px;width:13.9px;padding-top:4px;border-left:none;background:#fff"></div>
<div class="cb" style="left:23.2px;top:286.74px"></div>
<div class="c l" style="left:35.6px;top:284px;height:15px;width:33.8px;padding-top:4px;">1010</div>
<div class="c l" style="left:69.4px;top:284px;height:15px;width:63.3px;padding-top:4px;"><span class="u">GB-RM-V600</span></div>
<div class="c l" style="left:132.7px;top:284px;height:15px;width:97.5px;padding-top:4px;">Rücklicht Quick LED</div>
<div class="c l" style="left:230.2px;top:284px;height:15px;width:57.3px;padding-top:4px;"></div>
<div class="c r" style="left:287.5px;top:284px;height:15px;width:27.0px;padding-top:4px;">80</div>
<div class="c l" style="left:314.5px;top:284px;height:15px;width:50.8px;padding-top:4px;"><span class="u">53000003</span>...</div>
<div class="c l" style="left:365.3px;top:284px;height:15px;width:56.5px;padding-top:4px;background:#8fe0bc;border-left-color:#8fe0bc;border-bottom:1px solid rgba(255,255,255,0.45);">03.02.2023</div>
<div class="c l" style="left:421.8px;top:284px;height:15px;width:63.0px;padding-top:4px;">08.02.2023</div>
<div class="c l" style="left:484.8px;top:284px;height:15px;width:62.5px;padding-top:4px;background:#8fe0bc;border-left-color:#8fe0bc;border-bottom:1px solid rgba(255,255,255,0.45);">08.02.2023</div>
<div class="c r" style="left:547.3px;top:284px;height:15px;width:63.0px;padding-top:4px;"><span class="u">3</span></div>
<div class="c r" style="left:610.3px;top:284px;height:15px;width:61.9px;padding-top:4px;">3</div>
<div class="c r" style="left:672.2px;top:284px;height:15px;width:63.1px;padding-top:4px;">0</div>
<div class="c r" style="left:735.3px;top:284px;height:15px;width:27.1px;padding-top:4px;background:#fef6dc;border-left-color:#fef6dc;border-bottom:1px solid rgba(255,255,255,0.45);">3</div>
<div class="c r" style="left:762.4px;top:284px;height:15px;width:51.4px;padding-top:4px;background:#fef6dc;border-left-color:#f6eed3;border-bottom:1px solid rgba(255,255,255,0.45);">5</div>
<div class="c r" style="left:813.8px;top:284px;height:15px;width:56.4px;padding-top:4px;background:#ff8888;border-left-color:#ff8888;border-bottom:1px solid rgba(255,255,255,0.45);">2</div>
<div class="c r" style="left:870.2px;top:284px;height:15px;width:33.3px;padding-top:4px;"><span class="u">4</span></div>
<div class="c r" style="left:903.5px;top:284px;height:15px;width:52.6px;padding-top:4px;background:#007b33;border-left-color:#007b33;border-bottom:1px solid rgba(255,255,255,0.3);color:#fff;">2-</div>
<div class="c l" style="left:956.1px;top:284px;height:15px;width:33.5px;padding-top:4px;">1010</div>
<div class="c l" style="left:989.6px;top:284px;height:15px;width:27.0px;padding-top:4px;">0</div>
<div class="c r" style="left:1016.6px;top:284px;height:15px;width:26.9px;padding-top:4px;">0</div>
<div class="c r" style="left:1043.5px;top:284px;height:15px;width:33.2px;padding-top:4px;">0</div>
<div class="c l" style="left:1076.7px;top:284px;height:15px;width:6.9px;padding-top:4px;padding-left:1.3px;"><span class="u">1</span></div>
<div style="position:absolute;left:21.7px;top:299px;width:1061.9px;height:15px;background:#e8ecf0"></div>
<div class="c l" style="left:21.7px;top:299px;height:15px;width:13.9px;padding-top:4px;border-left:none;background:#fff"></div>
<div class="cb" style="left:23.2px;top:301.55px"></div>
<div class="c l" style="left:35.6px;top:299px;height:15px;width:33.8px;padding-top:4px;">1010</div>
<div class="c l" style="left:69.4px;top:299px;height:15px;width:63.3px;padding-top:4px;"><span class="u">GB-RM-V600</span></div>
<div class="c l" style="left:132.7px;top:299px;height:15px;width:97.5px;padding-top:4px;">Rücklicht Quick LED</div>
<div class="c l" style="left:230.2px;top:299px;height:15px;width:57.3px;padding-top:4px;"></div>
<div class="c r" style="left:287.5px;top:299px;height:15px;width:27.0px;padding-top:4px;">90</div>
<div class="c l" style="left:314.5px;top:299px;height:15px;width:50.8px;padding-top:4px;"><span class="u">53000003</span>...</div>
<div class="c l" style="left:365.3px;top:299px;height:15px;width:56.5px;padding-top:4px;background:#8fe0bc;border-left-color:#8fe0bc;border-bottom:1px solid rgba(255,255,255,0.45);">03.02.2023</div>
<div class="c l" style="left:421.8px;top:299px;height:15px;width:63.0px;padding-top:4px;">22.02.2023</div>
<div class="c l" style="left:484.8px;top:299px;height:15px;width:62.5px;padding-top:4px;background:#8fe0bc;border-left-color:#8fe0bc;border-bottom:1px solid rgba(255,255,255,0.45);">22.02.2023</div>
<div class="c r" style="left:547.3px;top:299px;height:15px;width:63.0px;padding-top:4px;"><span class="u">3</span></div>
<div class="c r" style="left:610.3px;top:299px;height:15px;width:61.9px;padding-top:4px;">3</div>
<div class="c r" style="left:672.2px;top:299px;height:15px;width:63.1px;padding-top:4px;">0</div>
<div class="c r" style="left:735.3px;top:299px;height:15px;width:27.1px;padding-top:4px;background:#fef6dc;border-left-color:#fef6dc;border-bottom:1px solid rgba(255,255,255,0.45);">3</div>
<div class="c r" style="left:762.4px;top:299px;height:15px;width:51.4px;padding-top:4px;background:#fef6dc;border-left-color:#f6eed3;border-bottom:1px solid rgba(255,255,255,0.45);">19</div>
<div class="c r" style="left:813.8px;top:299px;height:15px;width:56.4px;padding-top:4px;background:#ff8888;border-left-color:#ff8888;border-bottom:1px solid rgba(255,255,255,0.45);">16</div>
<div class="c r" style="left:870.2px;top:299px;height:15px;width:33.3px;padding-top:4px;"><span class="u">4</span></div>
<div class="c r" style="left:903.5px;top:299px;height:15px;width:52.6px;padding-top:4px;background:#007b33;border-left-color:#007b33;border-bottom:1px solid rgba(255,255,255,0.3);color:#fff;">7-</div>
<div class="c l" style="left:956.1px;top:299px;height:15px;width:33.5px;padding-top:4px;">1010</div>
<div class="c l" style="left:989.6px;top:299px;height:15px;width:27.0px;padding-top:4px;">0</div>
<div class="c r" style="left:1016.6px;top:299px;height:15px;width:26.9px;padding-top:4px;">0</div>
<div class="c r" style="left:1043.5px;top:299px;height:15px;width:33.2px;padding-top:4px;">0</div>
<div class="c l" style="left:1076.7px;top:299px;height:15px;width:6.9px;padding-top:4px;padding-left:1.3px;"><span class="u">1</span></div>
<div style="position:absolute;left:21.7px;top:314px;width:1061.9px;height:15px;background:#fff"></div>
<div class="c l" style="left:21.7px;top:314px;height:15px;width:13.9px;padding-top:3px;border-left:none;background:#fff"></div>
<div class="cb" style="left:23.2px;top:316.35px"></div>
<div class="c l" style="left:35.6px;top:314px;height:15px;width:33.8px;padding-top:3px;">1010</div>
<div class="c l" style="left:69.4px;top:314px;height:15px;width:63.3px;padding-top:3px;"><span class="u">GB-RM-V700</span></div>
<div class="c l" style="left:132.7px;top:314px;height:15px;width:97.5px;padding-top:3px;">Scheinwerfer 100 Lux ...</div>
<div class="c l" style="left:230.2px;top:314px;height:15px;width:57.3px;padding-top:3px;"></div>
<div class="c r" style="left:287.5px;top:314px;height:15px;width:27.0px;padding-top:3px;">100</div>
<div class="c l" style="left:314.5px;top:314px;height:15px;width:50.8px;padding-top:3px;"><span class="u">53000003</span>...</div>
<div class="c l" style="left:365.3px;top:314px;height:15px;width:56.5px;padding-top:3px;background:#8fe0bc;border-left-color:#8fe0bc;border-bottom:1px solid rgba(255,255,255,0.45);">03.02.2023</div>
<div class="c l" style="left:421.8px;top:314px;height:15px;width:63.0px;padding-top:3px;">14.02.2023</div>
<div class="c l" style="left:484.8px;top:314px;height:15px;width:62.5px;padding-top:3px;background:#8fe0bc;border-left-color:#8fe0bc;border-bottom:1px solid rgba(255,255,255,0.45);">14.02.2023</div>
<div class="c r" style="left:547.3px;top:314px;height:15px;width:63.0px;padding-top:3px;"><span class="u">3</span></div>
<div class="c r" style="left:610.3px;top:314px;height:15px;width:61.9px;padding-top:3px;">3</div>
<div class="c r" style="left:672.2px;top:314px;height:15px;width:63.1px;padding-top:3px;">0</div>
<div class="c r" style="left:735.3px;top:314px;height:15px;width:27.1px;padding-top:3px;background:#fef6dc;border-left-color:#fef6dc;border-bottom:1px solid rgba(255,255,255,0.45);">3</div>
<div class="c r" style="left:762.4px;top:314px;height:15px;width:51.4px;padding-top:3px;background:#fef6dc;border-left-color:#f6eed3;border-bottom:1px solid rgba(255,255,255,0.45);">11</div>
<div class="c r" style="left:813.8px;top:314px;height:15px;width:56.4px;padding-top:3px;background:#ff8888;border-left-color:#ff8888;border-bottom:1px solid rgba(255,255,255,0.45);">8</div>
<div class="c r" style="left:870.2px;top:314px;height:15px;width:33.3px;padding-top:3px;"><span class="u">4</span></div>
<div class="c r" style="left:903.5px;top:314px;height:15px;width:52.6px;padding-top:3px;background:#007b33;border-left-color:#007b33;border-bottom:1px solid rgba(255,255,255,0.3);color:#fff;">1</div>
<div class="c l" style="left:956.1px;top:314px;height:15px;width:33.5px;padding-top:3px;">1010</div>
<div class="c l" style="left:989.6px;top:314px;height:15px;width:27.0px;padding-top:3px;">0</div>
<div class="c r" style="left:1016.6px;top:314px;height:15px;width:26.9px;padding-top:3px;">0</div>
<div class="c r" style="left:1043.5px;top:314px;height:15px;width:33.2px;padding-top:3px;">0</div>
<div class="c l" style="left:1076.7px;top:314px;height:15px;width:6.9px;padding-top:3px;padding-left:1.3px;"><span class="u">1</span></div>
<div style="position:absolute;left:21.7px;top:329px;width:1061.9px;height:15px;background:#e8ecf0"></div>
<div class="c l" style="left:21.7px;top:329px;height:15px;width:13.9px;padding-top:3px;border-left:none;background:#fff"></div>
<div class="cb" style="left:23.2px;top:331.16px"></div>
<div class="c l" style="left:35.6px;top:329px;height:15px;width:33.8px;padding-top:3px;">1010</div>
<div class="c l" style="left:69.4px;top:329px;height:15px;width:63.3px;padding-top:3px;"><span class="u">GB-RM-V900</span></div>
<div class="c l" style="left:132.7px;top:329px;height:15px;width:97.5px;padding-top:3px;">Bremsen-Set DORE 80...</div>
<div class="c l" style="left:230.2px;top:329px;height:15px;width:57.3px;padding-top:3px;"></div>
<div class="c r" style="left:287.5px;top:329px;height:15px;width:27.0px;padding-top:3px;">130</div>
<div class="c l" style="left:314.5px;top:329px;height:15px;width:50.8px;padding-top:3px;"><span class="u">53000003</span>...</div>
<div class="c l" style="left:365.3px;top:329px;height:15px;width:56.5px;padding-top:3px;background:#8fe0bc;border-left-color:#8fe0bc;border-bottom:1px solid rgba(255,255,255,0.45);">03.02.2023</div>
<div class="c l" style="left:421.8px;top:329px;height:15px;width:63.0px;padding-top:3px;">08.02.2023</div>
<div class="c l" style="left:484.8px;top:329px;height:15px;width:62.5px;padding-top:3px;background:#8fe0bc;border-left-color:#8fe0bc;border-bottom:1px solid rgba(255,255,255,0.45);">08.02.2023</div>
<div class="c r" style="left:547.3px;top:329px;height:15px;width:63.0px;padding-top:3px;"><span class="u">3</span></div>
<div class="c r" style="left:610.3px;top:329px;height:15px;width:61.9px;padding-top:3px;">3</div>
<div class="c r" style="left:672.2px;top:329px;height:15px;width:63.1px;padding-top:3px;">0</div>
<div class="c r" style="left:735.3px;top:329px;height:15px;width:27.1px;padding-top:3px;background:#fef6dc;border-left-color:#fef6dc;border-bottom:1px solid rgba(255,255,255,0.45);">3</div>
<div class="c r" style="left:762.4px;top:329px;height:15px;width:51.4px;padding-top:3px;background:#fef6dc;border-left-color:#f6eed3;border-bottom:1px solid rgba(255,255,255,0.45);">5</div>
<div class="c r" style="left:813.8px;top:329px;height:15px;width:56.4px;padding-top:3px;background:#ff8888;border-left-color:#ff8888;border-bottom:1px solid rgba(255,255,255,0.45);">2</div>
<div class="c r" style="left:870.2px;top:329px;height:15px;width:33.3px;padding-top:3px;"><span class="u">6</span></div>
<div class="c r" style="left:903.5px;top:329px;height:15px;width:52.6px;padding-top:3px;background:#007b33;border-left-color:#007b33;border-bottom:1px solid rgba(255,255,255,0.3);color:#fff;"></div>
<div class="c l" style="left:956.1px;top:329px;height:15px;width:33.5px;padding-top:3px;">1010</div>
<div class="c l" style="left:989.6px;top:329px;height:15px;width:27.0px;padding-top:3px;">0</div>
<div class="c r" style="left:1016.6px;top:329px;height:15px;width:26.9px;padding-top:3px;">0</div>
<div class="c r" style="left:1043.5px;top:329px;height:15px;width:33.2px;padding-top:3px;">0</div>
<div class="c l" style="left:1076.7px;top:329px;height:15px;width:6.9px;padding-top:3px;padding-left:1.3px;"><span class="u">1</span></div>
<div style="position:absolute;left:21.7px;top:344px;width:1061.9px;height:14px;background:#fff"></div>
<div class="c l" style="left:21.7px;top:344px;height:14px;width:13.9px;padding-top:3px;border-left:none;background:#fff"></div>
<div class="cb" style="left:23.2px;top:345.97px"></div>
<div class="c l" style="left:35.6px;top:344px;height:14px;width:33.8px;padding-top:3px;">1010</div>
<div class="c l" style="left:69.4px;top:344px;height:14px;width:63.3px;padding-top:3px;"><span class="u">GB-RM-V200</span></div>
<div class="c l" style="left:132.7px;top:344px;height:14px;width:97.5px;padding-top:3px;">Tretlager Hollowech</div>
<div class="c l" style="left:230.2px;top:344px;height:14px;width:57.3px;padding-top:3px;"><span class="u">4500018900</span></div>
<div class="c r" style="left:287.5px;top:344px;height:14px;width:27.0px;padding-top:3px;">10</div>
<div class="c l" style="left:314.5px;top:344px;height:14px;width:50.8px;padding-top:3px;"><span class="u">53000003</span>...</div>
<div class="c l" style="left:365.3px;top:344px;height:14px;width:56.5px;padding-top:3px;background:#8fe0bc;border-left-color:#8fe0bc;border-bottom:1px solid rgba(255,255,255,0.45);">03.02.2023</div>
<div class="c l" style="left:421.8px;top:344px;height:14px;width:63.0px;padding-top:3px;">22.02.2023</div>
<div class="c l" style="left:484.8px;top:344px;height:14px;width:62.5px;padding-top:3px;background:#8fe0bc;border-left-color:#8fe0bc;border-bottom:1px solid rgba(255,255,255,0.45);">22.02.2023</div>
<div class="c r" style="left:547.3px;top:344px;height:14px;width:63.0px;padding-top:3px;"><span class="u">3</span></div>
<div class="c r" style="left:610.3px;top:344px;height:14px;width:61.9px;padding-top:3px;">3</div>
<div class="c r" style="left:672.2px;top:344px;height:14px;width:63.1px;padding-top:3px;">0</div>
<div class="c r" style="left:735.3px;top:344px;height:14px;width:27.1px;padding-top:3px;background:#fef6dc;border-left-color:#fef6dc;border-bottom:1px solid rgba(255,255,255,0.45);">3</div>
<div class="c r" style="left:762.4px;top:344px;height:14px;width:51.4px;padding-top:3px;background:#fef6dc;border-left-color:#f6eed3;border-bottom:1px solid rgba(255,255,255,0.45);">19</div>
<div class="c r" style="left:813.8px;top:344px;height:14px;width:56.4px;padding-top:3px;background:#ff8888;border-left-color:#ff8888;border-bottom:1px solid rgba(255,255,255,0.45);">16</div>
<div class="c r" style="left:870.2px;top:344px;height:14px;width:33.3px;padding-top:3px;"><span class="u">5</span></div>
<div class="c r" style="left:903.5px;top:344px;height:14px;width:52.6px;padding-top:3px;background:#007b33;border-left-color:#007b33;border-bottom:1px solid rgba(255,255,255,0.3);color:#fff;">5-</div>
<div class="c l" style="left:956.1px;top:344px;height:14px;width:33.5px;padding-top:3px;">1010</div>
<div class="c l" style="left:989.6px;top:344px;height:14px;width:27.0px;padding-top:3px;">2</div>
<div class="c r" style="left:1016.6px;top:344px;height:14px;width:26.9px;padding-top:3px;">0</div>
<div class="c r" style="left:1043.5px;top:344px;height:14px;width:33.2px;padding-top:3px;">0</div>
<div class="c l" style="left:1076.7px;top:344px;height:14px;width:6.9px;padding-top:3px;padding-left:1.3px;"><span class="u">1</span></div>
<div style="position:absolute;left:21.7px;top:358px;width:1061.9px;height:15px;background:#e8ecf0"></div>
<div class="c l" style="left:21.7px;top:358px;height:15px;width:13.9px;padding-top:4px;border-left:none;background:#fff"></div>
<div class="cb" style="left:23.2px;top:360.77px"></div>
<div class="c l" style="left:35.6px;top:358px;height:15px;width:33.8px;padding-top:4px;">1010</div>
<div class="c l" style="left:69.4px;top:358px;height:15px;width:63.3px;padding-top:4px;"><span class="u">GB-RM-V800</span></div>
<div class="c l" style="left:132.7px;top:358px;height:15px;width:97.5px;padding-top:4px;">Ergotec M-Bar Lenker</div>
<div class="c l" style="left:230.2px;top:358px;height:15px;width:57.3px;padding-top:4px;"></div>
<div class="c r" style="left:287.5px;top:358px;height:15px;width:27.0px;padding-top:4px;">20</div>
<div class="c l" style="left:314.5px;top:358px;height:15px;width:50.8px;padding-top:4px;"><span class="u">53000003</span>...</div>
<div class="c l" style="left:365.3px;top:358px;height:15px;width:56.5px;padding-top:4px;background:#8fe0bc;border-left-color:#8fe0bc;border-bottom:1px solid rgba(255,255,255,0.45);">03.02.2023</div>
<div class="c l" style="left:421.8px;top:358px;height:15px;width:63.0px;padding-top:4px;">22.02.2023</div>
<div class="c l" style="left:484.8px;top:358px;height:15px;width:62.5px;padding-top:4px;background:#8fe0bc;border-left-color:#8fe0bc;border-bottom:1px solid rgba(255,255,255,0.45);">22.02.2023</div>
<div class="c r" style="left:547.3px;top:358px;height:15px;width:63.0px;padding-top:4px;"><span class="u">3</span></div>
<div class="c r" style="left:610.3px;top:358px;height:15px;width:61.9px;padding-top:4px;">3</div>
<div class="c r" style="left:672.2px;top:358px;height:15px;width:63.1px;padding-top:4px;">0</div>
<div class="c r" style="left:735.3px;top:358px;height:15px;width:27.1px;padding-top:4px;background:#fef6dc;border-left-color:#fef6dc;border-bottom:1px solid rgba(255,255,255,0.45);">3</div>
<div class="c r" style="left:762.4px;top:358px;height:15px;width:51.4px;padding-top:4px;background:#fef6dc;border-left-color:#f6eed3;border-bottom:1px solid rgba(255,255,255,0.45);">19</div>
<div class="c r" style="left:813.8px;top:358px;height:15px;width:56.4px;padding-top:4px;background:#ff8888;border-left-color:#ff8888;border-bottom:1px solid rgba(255,255,255,0.45);">16</div>
<div class="c r" style="left:870.2px;top:358px;height:15px;width:33.3px;padding-top:4px;"><span class="u">5</span></div>
<div class="c r" style="left:903.5px;top:358px;height:15px;width:52.6px;padding-top:4px;background:#007b33;border-left-color:#007b33;border-bottom:1px solid rgba(255,255,255,0.3);color:#fff;">2-</div>
<div class="c l" style="left:956.1px;top:358px;height:15px;width:33.5px;padding-top:4px;">1010</div>
<div class="c l" style="left:989.6px;top:358px;height:15px;width:27.0px;padding-top:4px;">2</div>
<div class="c r" style="left:1016.6px;top:358px;height:15px;width:26.9px;padding-top:4px;">0</div>
<div class="c r" style="left:1043.5px;top:358px;height:15px;width:33.2px;padding-top:4px;">0</div>
<div class="c l" style="left:1076.7px;top:358px;height:15px;width:6.9px;padding-top:4px;padding-left:1.3px;"><span class="u">1</span></div>
<div style="position:absolute;left:21.7px;top:373px;width:1061.9px;height:15px;background:#fff"></div>
<div class="c l" style="left:21.7px;top:373px;height:15px;width:13.9px;padding-top:4px;border-left:none;background:#fff"></div>
<div class="cb" style="left:23.2px;top:375.58px"></div>
<div class="c l" style="left:35.6px;top:373px;height:15px;width:33.8px;padding-top:4px;">1010</div>
<div class="c l" style="left:69.4px;top:373px;height:15px;width:63.3px;padding-top:4px;"><span class="u">GB-RM-S300</span>...</div>
<div class="c l" style="left:132.7px;top:373px;height:15px;width:97.5px;padding-top:4px;">Kabel Z8</div>
<div class="c l" style="left:230.2px;top:373px;height:15px;width:57.3px;padding-top:4px;"><span class="u">4500018898</span></div>
<div class="c r" style="left:287.5px;top:373px;height:15px;width:27.0px;padding-top:4px;">10</div>
<div class="c l" style="left:314.5px;top:373px;height:15px;width:50.8px;padding-top:4px;"><span class="u">53000002</span>...</div>
<div class="c l" style="left:365.3px;top:373px;height:15px;width:56.5px;padding-top:4px;background:#8fe0bc;border-left-color:#8fe0bc;border-bottom:1px solid rgba(255,255,255,0.45);">03.02.2023</div>
<div class="c l" style="left:421.8px;top:373px;height:15px;width:63.0px;padding-top:4px;">08.02.2023</div>
<div class="c l" style="left:484.8px;top:373px;height:15px;width:62.5px;padding-top:4px;background:#8fe0bc;border-left-color:#8fe0bc;border-bottom:1px solid rgba(255,255,255,0.45);">08.02.2023</div>
<div class="c r" style="left:547.3px;top:373px;height:15px;width:63.0px;padding-top:4px;"><span class="u">37</span></div>
<div class="c r" style="left:610.3px;top:373px;height:15px;width:61.9px;padding-top:4px;">3</div>
<div class="c r" style="left:672.2px;top:373px;height:15px;width:63.1px;padding-top:4px;">0</div>
<div class="c r" style="left:735.3px;top:373px;height:15px;width:27.1px;padding-top:4px;background:#fef6dc;border-left-color:#fef6dc;border-bottom:1px solid rgba(255,255,255,0.45);">3</div>
<div class="c r" style="left:762.4px;top:373px;height:15px;width:51.4px;padding-top:4px;background:#fef6dc;border-left-color:#f6eed3;border-bottom:1px solid rgba(255,255,255,0.45);">5</div>
<div class="c r" style="left:813.8px;top:373px;height:15px;width:56.4px;padding-top:4px;background:#ff8888;border-left-color:#ff8888;border-bottom:1px solid rgba(255,255,255,0.45);">2</div>
<div class="c r" style="left:870.2px;top:373px;height:15px;width:33.3px;padding-top:4px;"><span class="u">20</span></div>
<div class="c r" style="left:903.5px;top:373px;height:15px;width:52.6px;padding-top:4px;background:#007b33;border-left-color:#007b33;border-bottom:1px solid rgba(255,255,255,0.3);color:#fff;"></div>
<div class="c l" style="left:956.1px;top:373px;height:15px;width:33.5px;padding-top:4px;">1010</div>
<div class="c l" style="left:989.6px;top:373px;height:15px;width:27.0px;padding-top:4px;">0</div>
<div class="c r" style="left:1016.6px;top:373px;height:15px;width:26.9px;padding-top:4px;">0</div>
<div class="c r" style="left:1043.5px;top:373px;height:15px;width:33.2px;padding-top:4px;">0</div>
<div class="c l" style="left:1076.7px;top:373px;height:15px;width:6.9px;padding-top:4px;padding-left:1.3px;"><span class="u">D</span></div>
<div style="position:absolute;left:21.7px;top:388px;width:1061.9px;height:15px;background:#e8ecf0"></div>
<div class="c l" style="left:21.7px;top:388px;height:15px;width:13.9px;padding-top:3px;border-left:none;background:#fff"></div>
<div class="cb" style="left:23.2px;top:390.38px"></div>
<div class="c l" style="left:35.6px;top:388px;height:15px;width:33.8px;padding-top:3px;">1010</div>
<div class="c l" style="left:69.4px;top:388px;height:15px;width:63.3px;padding-top:3px;"><span class="u">GB-RM-S300</span>...</div>
<div class="c l" style="left:132.7px;top:388px;height:15px;width:97.5px;padding-top:3px;">Kabel Z8</div>
<div class="c l" style="left:230.2px;top:388px;height:15px;width:57.3px;padding-top:3px;"><span class="u">4500018896</span></div>
<div class="c r" style="left:287.5px;top:388px;height:15px;width:27.0px;padding-top:3px;">10</div>
<div class="c l" style="left:314.5px;top:388px;height:15px;width:50.8px;padding-top:3px;"><span class="u">53000002</span>...</div>
<div class="c l" style="left:365.3px;top:388px;height:15px;width:56.5px;padding-top:3px;background:#8fe0bc;border-left-color:#8fe0bc;border-bottom:1px solid rgba(255,255,255,0.45);">03.02.2023</div>
<div class="c l" style="left:421.8px;top:388px;height:15px;width:63.0px;padding-top:3px;">03.02.2023</div>
<div class="c l" style="left:484.8px;top:388px;height:15px;width:62.5px;padding-top:3px;background:#8fe0bc;border-left-color:#8fe0bc;border-bottom:1px solid rgba(255,255,255,0.45);">03.02.2023</div>
<div class="c r" style="left:547.3px;top:388px;height:15px;width:63.0px;padding-top:3px;"><span class="u">37</span></div>
<div class="c r" style="left:610.3px;top:388px;height:15px;width:61.9px;padding-top:3px;">3</div>
<div class="c r" style="left:672.2px;top:388px;height:15px;width:63.1px;padding-top:3px;">0</div>
<div class="c r" style="left:735.3px;top:388px;height:15px;width:27.1px;padding-top:3px;background:#fef6dc;border-left-color:#fef6dc;border-bottom:1px solid rgba(255,255,255,0.45);">3</div>
<div class="c r" style="left:762.4px;top:388px;height:15px;width:51.4px;padding-top:3px;background:#fef6dc;border-left-color:#f6eed3;border-bottom:1px solid rgba(255,255,255,0.45);">0</div>
<div class="c r" style="left:813.8px;top:388px;height:15px;width:56.4px;padding-top:3px;background:#ff8888;border-left-color:#ff8888;border-bottom:1px solid rgba(255,255,255,0.45);">3</div>
<div class="c r" style="left:870.2px;top:388px;height:15px;width:33.3px;padding-top:3px;"><span class="u">20</span></div>
<div class="c r" style="left:903.5px;top:388px;height:15px;width:52.6px;padding-top:3px;background:#007b33;border-left-color:#007b33;border-bottom:1px solid rgba(255,255,255,0.3);color:#fff;"></div>
<div class="c l" style="left:956.1px;top:388px;height:15px;width:33.5px;padding-top:3px;">1010</div>
<div class="c l" style="left:989.6px;top:388px;height:15px;width:27.0px;padding-top:3px;">0</div>
<div class="c r" style="left:1016.6px;top:388px;height:15px;width:26.9px;padding-top:3px;">0</div>
<div class="c r" style="left:1043.5px;top:388px;height:15px;width:33.2px;padding-top:3px;">0</div>
<div class="c l" style="left:1076.7px;top:388px;height:15px;width:6.9px;padding-top:3px;padding-left:1.3px;"><span class="u">D</span></div>
<div style="position:absolute;left:21.7px;top:403px;width:1061.9px;height:15px;background:#fff"></div>
<div class="c l" style="left:21.7px;top:403px;height:15px;width:13.9px;padding-top:3px;border-left:none;background:#fff"></div>
<div class="cb" style="left:23.2px;top:405.19px"></div>
<div class="c l" style="left:35.6px;top:403px;height:15px;width:33.8px;padding-top:3px;">1010</div>
<div class="c l" style="left:69.4px;top:403px;height:15px;width:63.3px;padding-top:3px;"><span class="u">GB-RM-S999</span>...</div>
<div class="c l" style="left:132.7px;top:403px;height:15px;width:97.5px;padding-top:3px;">Rad vorne M 29er</div>
<div class="c l" style="left:230.2px;top:403px;height:15px;width:57.3px;padding-top:3px;"><span class="u">4500018888</span></div>
<div class="c r" style="left:287.5px;top:403px;height:15px;width:27.0px;padding-top:3px;">10</div>
<div class="c l" style="left:314.5px;top:403px;height:15px;width:50.8px;padding-top:3px;"><span class="u">53000002</span>...</div>
<div class="c l" style="left:365.3px;top:403px;height:15px;width:56.5px;padding-top:3px;background:#8fe0bc;border-left-color:#8fe0bc;border-bottom:1px solid rgba(255,255,255,0.45);">03.02.2023</div>
<div class="c l" style="left:421.8px;top:403px;height:15px;width:63.0px;padding-top:3px;">15.02.2023</div>
<div class="c l" style="left:484.8px;top:403px;height:15px;width:62.5px;padding-top:3px;background:#8fe0bc;border-left-color:#8fe0bc;border-bottom:1px solid rgba(255,255,255,0.45);">15.02.2023</div>
<div class="c r" style="left:547.3px;top:403px;height:15px;width:63.0px;padding-top:3px;"><span class="u">29</span></div>
<div class="c r" style="left:610.3px;top:403px;height:15px;width:61.9px;padding-top:3px;">3</div>
<div class="c r" style="left:672.2px;top:403px;height:15px;width:63.1px;padding-top:3px;">0</div>
<div class="c r" style="left:735.3px;top:403px;height:15px;width:27.1px;padding-top:3px;background:#fef6dc;border-left-color:#fef6dc;border-bottom:1px solid rgba(255,255,255,0.45);">29</div>
<div class="c r" style="left:762.4px;top:403px;height:15px;width:51.4px;padding-top:3px;background:#fef6dc;border-left-color:#f6eed3;border-bottom:1px solid rgba(255,255,255,0.45);">12</div>
<div class="c r" style="left:813.8px;top:403px;height:15px;width:56.4px;padding-top:3px;background:#ff8888;border-left-color:#ff8888;border-bottom:1px solid rgba(255,255,255,0.45);">17</div>
<div class="c r" style="left:870.2px;top:403px;height:15px;width:33.3px;padding-top:3px;"><span class="u">29</span></div>
<div class="c r" style="left:903.5px;top:403px;height:15px;width:52.6px;padding-top:3px;background:#007b33;border-left-color:#007b33;border-bottom:1px solid rgba(255,255,255,0.3);color:#fff;">6-</div>
<div class="c l" style="left:956.1px;top:403px;height:15px;width:33.5px;padding-top:3px;">1010</div>
<div class="c l" style="left:989.6px;top:403px;height:15px;width:27.0px;padding-top:3px;">0</div>
<div class="c r" style="left:1016.6px;top:403px;height:15px;width:26.9px;padding-top:3px;">0</div>
<div class="c r" style="left:1043.5px;top:403px;height:15px;width:33.2px;padding-top:3px;">0</div>
<div class="c l" style="left:1076.7px;top:403px;height:15px;width:6.9px;padding-top:3px;padding-left:1.3px;"><span class="u">D</span></div>
<div style="position:absolute;left:21.7px;top:418px;width:1061.9px;height:14px;background:#e8ecf0"></div>
<div class="c l" style="left:21.7px;top:418px;height:14px;width:13.9px;padding-top:3px;border-left:none;background:#fff"></div>
<div class="cb" style="left:23.2px;top:420.00px"></div>
<div class="c l" style="left:35.6px;top:418px;height:14px;width:33.8px;padding-top:3px;">1010</div>
<div class="c l" style="left:69.4px;top:418px;height:14px;width:63.3px;padding-top:3px;"><span class="u">GB-RM-S999</span>...</div>
<div class="c l" style="left:132.7px;top:418px;height:14px;width:97.5px;padding-top:3px;">Rad vorne M 29er</div>
<div class="c l" style="left:230.2px;top:418px;height:14px;width:57.3px;padding-top:3px;"><span class="u">4500018887</span></div>
<div class="c r" style="left:287.5px;top:418px;height:14px;width:27.0px;padding-top:3px;">10</div>
<div class="c l" style="left:314.5px;top:418px;height:14px;width:50.8px;padding-top:3px;"><span class="u">53000002</span>...</div>
<div class="c l" style="left:365.3px;top:418px;height:14px;width:56.5px;padding-top:3px;background:#8fe0bc;border-left-color:#8fe0bc;border-bottom:1px solid rgba(255,255,255,0.45);">03.02.2023</div>
<div class="c l" style="left:421.8px;top:418px;height:14px;width:63.0px;padding-top:3px;">15.02.2023</div>
<div class="c l" style="left:484.8px;top:418px;height:14px;width:62.5px;padding-top:3px;background:#8fe0bc;border-left-color:#8fe0bc;border-bottom:1px solid rgba(255,255,255,0.45);">15.02.2023</div>
<div class="c r" style="left:547.3px;top:418px;height:14px;width:63.0px;padding-top:3px;"><span class="u">29</span></div>
<div class="c r" style="left:610.3px;top:418px;height:14px;width:61.9px;padding-top:3px;">3</div>
<div class="c r" style="left:672.2px;top:418px;height:14px;width:63.1px;padding-top:3px;">0</div>
<div class="c r" style="left:735.3px;top:418px;height:14px;width:27.1px;padding-top:3px;background:#fef6dc;border-left-color:#fef6dc;border-bottom:1px solid rgba(255,255,255,0.45);">29</div>
<div class="c r" style="left:762.4px;top:418px;height:14px;width:51.4px;padding-top:3px;background:#fef6dc;border-left-color:#f6eed3;border-bottom:1px solid rgba(255,255,255,0.45);">12</div>
<div class="c r" style="left:813.8px;top:418px;height:14px;width:56.4px;padding-top:3px;background:#ff8888;border-left-color:#ff8888;border-bottom:1px solid rgba(255,255,255,0.45);">17</div>
<div class="c r" style="left:870.2px;top:418px;height:14px;width:33.3px;padding-top:3px;"><span class="u">29</span></div>
<div class="c r" style="left:903.5px;top:418px;height:14px;width:52.6px;padding-top:3px;background:#007b33;border-left-color:#007b33;border-bottom:1px solid rgba(255,255,255,0.3);color:#fff;">5-</div>
<div class="c l" style="left:956.1px;top:418px;height:14px;width:33.5px;padding-top:3px;">1010</div>
<div class="c l" style="left:989.6px;top:418px;height:14px;width:27.0px;padding-top:3px;">0</div>
<div class="c r" style="left:1016.6px;top:418px;height:14px;width:26.9px;padding-top:3px;">0</div>
<div class="c r" style="left:1043.5px;top:418px;height:14px;width:33.2px;padding-top:3px;">0</div>
<div class="c l" style="left:1076.7px;top:418px;height:14px;width:6.9px;padding-top:3px;padding-left:1.3px;"><span class="u">D</span></div>
<div style="position:absolute;left:21.7px;top:432px;width:1061.9px;height:15px;background:#fff"></div>
<div class="c l" style="left:21.7px;top:432px;height:15px;width:13.9px;padding-top:4px;border-left:none;background:#fff"></div>
<div class="cb" style="left:23.2px;top:434.80px"></div>
<div class="c l" style="left:35.6px;top:432px;height:15px;width:33.8px;padding-top:4px;">1010</div>
<div class="c l" style="left:69.4px;top:432px;height:15px;width:63.3px;padding-top:4px;"><span class="u">GB-RM-S999</span>...</div>
<div class="c l" style="left:132.7px;top:432px;height:15px;width:97.5px;padding-top:4px;">Rad hinten M 29er</div>
<div class="c l" style="left:230.2px;top:432px;height:15px;width:57.3px;padding-top:4px;"><span class="u">4500018886</span></div>
<div class="c r" style="left:287.5px;top:432px;height:15px;width:27.0px;padding-top:4px;">10</div>
<div class="c l" style="left:314.5px;top:432px;height:15px;width:50.8px;padding-top:4px;"><span class="u">53000002</span>...</div>
<div class="c l" style="left:365.3px;top:432px;height:15px;width:56.5px;padding-top:4px;background:#8fe0bc;border-left-color:#8fe0bc;">03.02.2023</div>
<div class="c l" style="left:421.8px;top:432px;height:15px;width:63.0px;padding-top:4px;">21.02.2023</div>
<div class="c l" style="left:484.8px;top:432px;height:15px;width:62.5px;padding-top:4px;background:#8fe0bc;border-left-color:#8fe0bc;">21.02.2023</div>
<div class="c r" style="left:547.3px;top:432px;height:15px;width:63.0px;padding-top:4px;"><span class="u">33</span></div>
<div class="c r" style="left:610.3px;top:432px;height:15px;width:61.9px;padding-top:4px;">3</div>
<div class="c r" style="left:672.2px;top:432px;height:15px;width:63.1px;padding-top:4px;">0</div>
<div class="c r" style="left:735.3px;top:432px;height:15px;width:27.1px;padding-top:4px;background:#fef6dc;border-left-color:#fef6dc;">33</div>
<div class="c r" style="left:762.4px;top:432px;height:15px;width:51.4px;padding-top:4px;background:#fef6dc;border-left-color:#f6eed3;">18</div>
<div class="c r" style="left:813.8px;top:432px;height:15px;width:56.4px;padding-top:4px;background:#ff8888;border-left-color:#ff8888;">15</div>
<div class="c r" style="left:870.2px;top:432px;height:15px;width:33.3px;padding-top:4px;"><span class="u">33</span></div>
<div class="c r" style="left:903.5px;top:432px;height:15px;width:52.6px;padding-top:4px;background:#007b33;border-left-color:#007b33;color:#fff;"></div>
<div class="c l" style="left:956.1px;top:432px;height:15px;width:33.5px;padding-top:4px;">1010</div>
<div class="c l" style="left:989.6px;top:432px;height:15px;width:27.0px;padding-top:4px;">0</div>
<div class="c r" style="left:1016.6px;top:432px;height:15px;width:26.9px;padding-top:4px;">0</div>
<div class="c r" style="left:1043.5px;top:432px;height:15px;width:33.2px;padding-top:4px;">0</div>
<div class="c l" style="left:1076.7px;top:432px;height:15px;width:6.9px;padding-top:4px;padding-left:1.3px;"><span class="u">D</span></div>
<div style="position:absolute;left:1083.6px;top:106.67px;width:7.2px;height:348.9px;background:#fff"></div>
<div style="position:absolute;left:1083.6px;top:107.1px;width:7.2px;height:4.8px;background:#8f8f8f;border-radius:1.2px"></div>
<div style="position:absolute;left:21.4px;top:447px;width:1062.1999999999998px;height:8px;background:#fff;"></div>
<div style="position:absolute;left:37.3px;top:447px;width:831px;height:7.2px;background:#979797;border-radius:0 1px 1px 0"></div>
<div style="position:absolute;left:36.4px;top:447px;width:1px;height:9px;background:#e5e5e5"></div>
<div style="position:absolute;left:21.7px;top:454.4px;width:1069.2px;height:1px;background:#ebebeb"></div>
<div style="position:absolute;left:1083.4px;top:447px;width:1px;height:8px;background:#ebebeb"></div>
<div style="position:absolute;left:1090.6px;top:106.6px;width:1px;height:348.6px;background:#efefef"></div>
<div style="position:absolute;left:21px;top:460px;width:1070px;height:4.4px;background:linear-gradient(#f3f5f7,#e8ecef)"></div>
<div class="st" style="left:20.7px;width:101.0px">1849 Datensätze selektiert</div>
<div class="st" style="left:125.2px;width:88.8px">57 Materialien</div>
<div class="st" style="left:217.5px;width:89.5px">587 Aufträge</div>
<div class="st" style="left:310.0px;width:89.0px">702 Bestellungen</div>
<div class="st" style="left:402.4px;width:688.4px">7 Lieferanten</div>
<svg style="position:absolute;left:108.6px;top:466px" width="11" height="12" viewBox="0 0 11 12"><path d="M2.2 4.4 L5.2 1.5 L8.2 4.4Z" fill="#bdbdbd"/><rect x="1.2" y="5.5" width="8.4" height="0.8" fill="#dcdcdc"/><path d="M2.0 8.2 L8.4 8.2 L5.2 11.4Z" fill="#2a2a2a"/></svg>
<div style="position:absolute;left:0;top:496px;width:1119px;height:1px;background:#c4c4c4"></div>
<div style="position:absolute;left:0;top:497px;width:1119px;height:1px;background:#ececec"></div>
<div style="position:absolute;left:0;top:495px;width:1119px;height:1px;background:#f4f4f4"></div>
<div style="position:absolute;left:1073px;top:501.4px;width:26.2px;height:15.2px;background:#0a6ed1;border-radius:2.4px;color:#fff;font-weight:bold;font-size:8.3px;line-height:16.6px;text-align:center;overflow:hidden">Enter</div>
<svg style="position:absolute;left:0;top:0" width="1119" height="518" viewBox="2 2 1119 518"><path d="M77.20 69.6 V85.0" stroke="#d7d7d7" stroke-width="1.25"/><path d="M196.30 69.6 V85.0" stroke="#d7d7d7" stroke-width="1.25"/><path d="M254.90 69.6 V85.0" stroke="#d7d7d7" stroke-width="1.25"/><path d="M372.70 69.6 V85.0" stroke="#d7d7d7" stroke-width="1.25"/><path d="M398.80 69.6 V85.0" stroke="#d7d7d7" stroke-width="1.25"/><path d="M424.90 69.6 V85.0" stroke="#d7d7d7" stroke-width="1.25"/><path d="M539.90 69.6 V85.0" stroke="#d7d7d7" stroke-width="1.25"/><rect x="27.70" y="69.75" width="23.90" height="14.60" rx="2.4" fill="#fff" stroke="#4585c2" stroke-width="1.05"/><rect x="57.50" y="69.75" width="14.70" height="14.60" rx="2.4" fill="#fff" stroke="#4585c2" stroke-width="1.05"/><rect x="83.70" y="69.75" width="14.30" height="14.60" rx="2.4" fill="#fff" stroke="#4585c2" stroke-width="1.05"/><rect x="103.50" y="69.75" width="14.70" height="14.60" rx="2.4" fill="#fff" stroke="#4585c2" stroke-width="1.05"/><rect x="123.60" y="69.75" width="14.70" height="14.60" rx="2.4" fill="#fff" stroke="#4585c2" stroke-width="1.05"/><rect x="143.60" y="69.75" width="14.70" height="14.60" rx="2.4" fill="#f7f7f7" stroke="#b7d0e6" stroke-width="1.05"/><rect x="163.70" y="69.75" width="27.00" height="14.60" rx="2.4" fill="#fff" stroke="#4585c2" stroke-width="1.05"/><path d="M178.40 69.75 V84.35" stroke="#4585c2" stroke-width="0.95"/><rect x="202.50" y="69.75" width="26.70" height="14.60" rx="2.4" fill="#fff" stroke="#4585c2" stroke-width="1.05"/><path d="M216.80 69.75 V84.35" stroke="#4585c2" stroke-width="0.95"/><rect x="234.60" y="69.75" width="14.50" height="14.60" rx="2.4" fill="#f7f7f7" stroke="#b7d0e6" stroke-width="1.05"/><rect x="260.80" y="69.75" width="14.40" height="14.60" rx="2.4" fill="#fff" stroke="#4585c2" stroke-width="1.05"/><rect x="280.70" y="69.75" width="24.20" height="14.60" rx="2.4" fill="#fff" stroke="#4585c2" stroke-width="1.05"/><rect x="310.50" y="69.75" width="23.90" height="14.60" rx="2.4" fill="#fff" stroke="#4585c2" stroke-width="1.05"/><rect x="340.00" y="69.75" width="27.10" height="14.60" rx="2.4" fill="#fff" stroke="#4585c2" stroke-width="1.05"/><path d="M354.50 69.75 V84.35" stroke="#4585c2" stroke-width="0.95"/><rect x="378.50" y="69.75" width="14.60" height="14.60" rx="2.4" fill="#fff" stroke="#4585c2" stroke-width="1.05"/><rect x="404.50" y="69.75" width="14.60" height="14.60" rx="2.4" fill="#fff" stroke="#4585c2" stroke-width="1.05"/><rect x="430.70" y="69.75" width="14.50" height="14.60" rx="2.4" fill="#fff" stroke="#4585c2" stroke-width="1.05"/><rect x="450.50" y="69.75" width="84.00" height="14.60" rx="2.4" fill="#fff" stroke="#4585c2" stroke-width="1.05"/><rect x="545.70" y="69.75" width="38.40" height="14.60" rx="2.4" fill="#fff" stroke="#4585c2" stroke-width="1.05"/><rect x="589.70" y="69.75" width="26.80" height="14.60" rx="2.4" fill="#fff" stroke="#4585c2" stroke-width="1.05"/><path d="M604.30 69.75 V84.35" stroke="#4585c2" stroke-width="0.95"/><rect x="622.40" y="69.75" width="14.30" height="14.60" rx="2.4" fill="#fff" stroke="#4585c2" stroke-width="1.05"/><rect x="30.8" y="72.9" width="8.6" height="8.5" fill="#3f86c6"/><rect x="30.8" y="72.9" width="8.6" height="2.2" fill="#0d4f9e"/><rect x="32.6" y="76.2" width="6" height="1.1" fill="#d6e6f4"/><rect x="33.6" y="78.0" width="5" height="1.6" fill="#e4eef8"/><rect x="31.2" y="76.2" width="0.9" height="1" fill="#cfe0f0"/><rect x="31.2" y="78.2" width="0.9" height="1" fill="#cfe0f0"/><path d="M42.2 76.0 L45.9 79.7 L49.6 76.0" fill="none" stroke="#4a8fd0" stroke-width="0.85"/><circle cx="63.6" cy="76.5" r="2.9" fill="none" stroke="#2b74b8" stroke-width="0.9"/><path d="M65.8 78.8 L68.6 81.0" stroke="#0f5aa6" stroke-width="1.3" stroke-linecap="round"/><path d="M62.3 76.6 L63.3 77.6 L65.0 75.4" fill="none" stroke="#0f5aa6" stroke-width="0.8"/><rect x="89.4" y="74.15" width="3.0" height="1.15" fill="#a9c7e3"/><rect x="88.4" y="76.15" width="5.0" height="1.15" fill="#8fb6da"/><rect x="87.4" y="78.05" width="7.0" height="1.15" fill="#6fa3d2"/><rect x="86.3" y="80.05" width="9.0" height="1.15" fill="#5a95cb"/><rect x="106.3" y="74.40" width="9.1" height="1.25" fill="#8fb6da"/><rect x="107.2" y="76.20" width="7.3" height="1.25" fill="#7fabd6"/><rect x="108.3" y="78.20" width="5.0" height="1.25" fill="#6fa3d2"/><rect x="109.3" y="80.00" width="3.1" height="1.25" fill="#6fa3d2"/><circle cx="130" cy="76.5" r="3.0" fill="none" stroke="#2b74b8" stroke-width="0.95"/><path d="M132.3 78.8 L135 81.0" stroke="#0f5aa6" stroke-width="1.3" stroke-linecap="round"/><g opacity="0.38"><circle cx="149.3" cy="77.3" r="2.6" fill="none" stroke="#2b74b8" stroke-width="0.9"/><path d="M151.3 79.2 L153.6 81.0" stroke="#2b74b8" stroke-width="1.1"/><path d="M152.4 74.4 H155.4 M153.9 72.9 V75.9" stroke="#2b74b8" stroke-width="0.8"/></g><path d="M167.1 73.2 H175.3 L171.7 77.8 V80.2 L170.5 81.0 V77.8 Z" fill="none" stroke="#2b74b8" stroke-width="0.95" stroke-linejoin="round"/><path d="M181.0 76.0 L184.7 79.7 L188.4 76.0" fill="none" stroke="#4a8fd0" stroke-width="0.85"/><path d="M211.3 75.3 V74.2 H207.3 L209.6 77.4 L207.3 80.7 H211.4 V79.6" fill="none" stroke="#2b74b8" stroke-width="0.95"/><path d="M219.8 76.0 L223.5 79.7 L227.2 76.0" fill="none" stroke="#4a8fd0" stroke-width="0.85"/><g opacity="0.35" fill="none" stroke="#2b74b8" stroke-width="0.7"><path d="M240.2 73.8 H237.9 L239.2 75.3 L237.9 76.8 H240.3"/><path d="M245.0 74.3 L239.7 80.0"/><path d="M246.0 78.2 H243.7 L245.0 79.7 L243.7 81.2 H246.1"/></g><rect x="265.9" y="73.4" width="5.2" height="2.4" fill="#eef4fa" stroke="#2b74b8" stroke-width="0.7"/><rect x="264.0" y="75.3" width="8.9" height="4.0" rx="1.1" fill="#4a8dcb"/><rect x="266.0" y="77.9" width="5.0" height="3.3" fill="#e6eff8" stroke="#2b74b8" stroke-width="0.7"/><rect x="267.2" y="79.2" width="2.6" height="0.7" fill="#6fa3d2"/><rect x="265.0" y="76.2" width="1.0" height="0.8" fill="#d6e6f4"/><rect x="284.9" y="73.1" width="6.5" height="8.2" fill="#8db7df"/><rect x="284.9" y="73.1" width="6.5" height="1.7" fill="#3f86c6"/><rect x="286.0" y="75.6" width="4.4" height="0.8" fill="#eaf2fa"/><rect x="286.0" y="77.2" width="2.0" height="0.8" fill="#eaf2fa"/><rect x="286.0" y="78.8" width="1.6" height="0.8" fill="#eaf2fa"/><circle cx="289.5" cy="78.7" r="1.5" fill="#f2f7fc" stroke="#2b74b8" stroke-width="0.7"/><path d="M290.5 79.8 L292.1 81.4" stroke="#0f5aa6" stroke-width="0.9"/><path d="M295.4 76.0 L299.1 79.7 L302.8 76.0" fill="none" stroke="#4a8fd0" stroke-width="0.85"/><path d="M313.6 79.2 V72.8 H318.4 V74.4" fill="none" stroke="#2b74b8" stroke-width="0.85"/><path d="M313.6 79.2 H316.0" fill="none" stroke="#2b74b8" stroke-width="0.85"/><rect x="316.6" y="74.6" width="5.6" height="6.7" fill="none" stroke="#2b74b8" stroke-width="0.85"/><path d="M315.2 77.6 H319.6 M318.2 76.1 L319.8 77.6 L318.2 79.1" fill="none" stroke="#0f5aa6" stroke-width="0.85"/><path d="M325.0 76.0 L328.7 79.7 L332.4 76.0" fill="none" stroke="#4a8fd0" stroke-width="0.85"/><rect x="343.5" y="73.3" width="2.7" height="1.9" fill="none" stroke="#2b74b8" stroke-width="0.7"/><rect x="343.5" y="75.9" width="2.7" height="1.9" fill="none" stroke="#2b74b8" stroke-width="0.7"/><rect x="343.5" y="78.5" width="2.7" height="1.9" fill="none" stroke="#2b74b8" stroke-width="0.7"/><rect x="347.0" y="73.3" width="2.7" height="1.9" fill="none" stroke="#2b74b8" stroke-width="0.7"/><rect x="347.0" y="75.9" width="2.7" height="1.9" fill="none" stroke="#2b74b8" stroke-width="0.7"/><circle cx="349.3" cy="79.3" r="1.6" fill="#fff" stroke="#0f5aa6" stroke-width="1.0"/><path d="M357.5 76.0 L361.2 79.7 L364.9 76.0" fill="none" stroke="#4a8fd0" stroke-width="0.85"/><rect x="382.2" y="73.4" width="7.4" height="7.6" fill="#e9f1f9" stroke="#2b74b8" stroke-width="0.9"/><rect x="385.4" y="76.7" width="1.1" height="3.6" fill="#0f5aa6"/><rect x="385.4" y="74.9" width="1.1" height="1.1" fill="#0f5aa6"/><rect x="384.7" y="79.6" width="2.5" height="0.8" fill="#2b74b8"/><path d="M408.2 74.6 H412.6" stroke="#2b74b8" stroke-width="0.8"/><path d="M411.0 73.2 L412.9 74.6 L411.0 76.0Z" fill="#0f5aa6"/><text x="408.6" y="80.6" font-family="Liberation Sans" font-size="5.4" font-weight="bold" fill="#2b74b8">,00</text><g transform="rotate(-34 438.1 77.1)" fill="none" stroke="#2b74b8" stroke-width="0.8"><rect x="432.9" y="75.1" width="10.4" height="4.0" rx="2"/><path d="M434.8 77.1 H441.4 M436.2 76.1 V78.1 M437.8 76.1 V78.1 M439.4 76.1 V78.1"/></g><rect x="458.4" y="72.8" width="4.0" height="3.9" fill="#3a80c2"/><rect x="459.79999999999995" y="74.1" width="1.2" height="1.2" fill="#e4eef8"/><rect x="453.6" y="77.2" width="4.0" height="3.9" fill="#3a80c2"/><rect x="455.0" y="78.5" width="1.2" height="1.2" fill="#e4eef8"/><rect x="458.4" y="77.2" width="4.0" height="3.9" fill="#3a80c2"/><rect x="459.79999999999995" y="78.5" width="1.2" height="1.2" fill="#e4eef8"/><rect x="455.4" y="75.6" width="3.2" height="2" fill="#3a80c2"/><rect x="551.6" y="72.6" width="6.0" height="8.4" fill="#5a97cf"/><rect x="551.6" y="72.6" width="6.0" height="1.6" fill="#2b74b8"/><path d="M553.4 75.2 L556.4 79.2 M556.4 75.2 L553.4 79.2" stroke="#dce9f5" stroke-width="0.7"/><path d="M548.5 77.0 H553.0" stroke="#0f5aa6" stroke-width="1.2"/><path d="M551.4 74.8 L554.2 77.0 L551.4 79.2Z" fill="#0f5aa6"/><path d="M593.0 73.0 H598.6 L596.6 75.4 H594.8Z" fill="#0f5aa6"/><path d="M598.8 73.4 L595.6 81.0" stroke="#0f5aa6" stroke-width="0.95"/><path d="M598.4 77.4 L601.2 80.4 M601.2 77.4 L598.4 80.4" stroke="#2b74b8" stroke-width="0.75"/><path d="M607.2 76.0 L610.9 79.7 L614.6 76.0" fill="none" stroke="#4a8fd0" stroke-width="0.85"/><g fill="none" stroke="#2b74b8" stroke-width="0.8"><path d="M625.2 76.2 V73.2 H628.2"/><path d="M634.4 78.4 V81.4 H631.4"/><path d="M630.6 73.0 H634.6 V77.0 M634.4 73.2 L631.0 76.6"/><path d="M629.0 81.6 H625.0 V77.6 M625.2 81.4 L628.6 78.0"/></g></svg>
</div></body></html>
